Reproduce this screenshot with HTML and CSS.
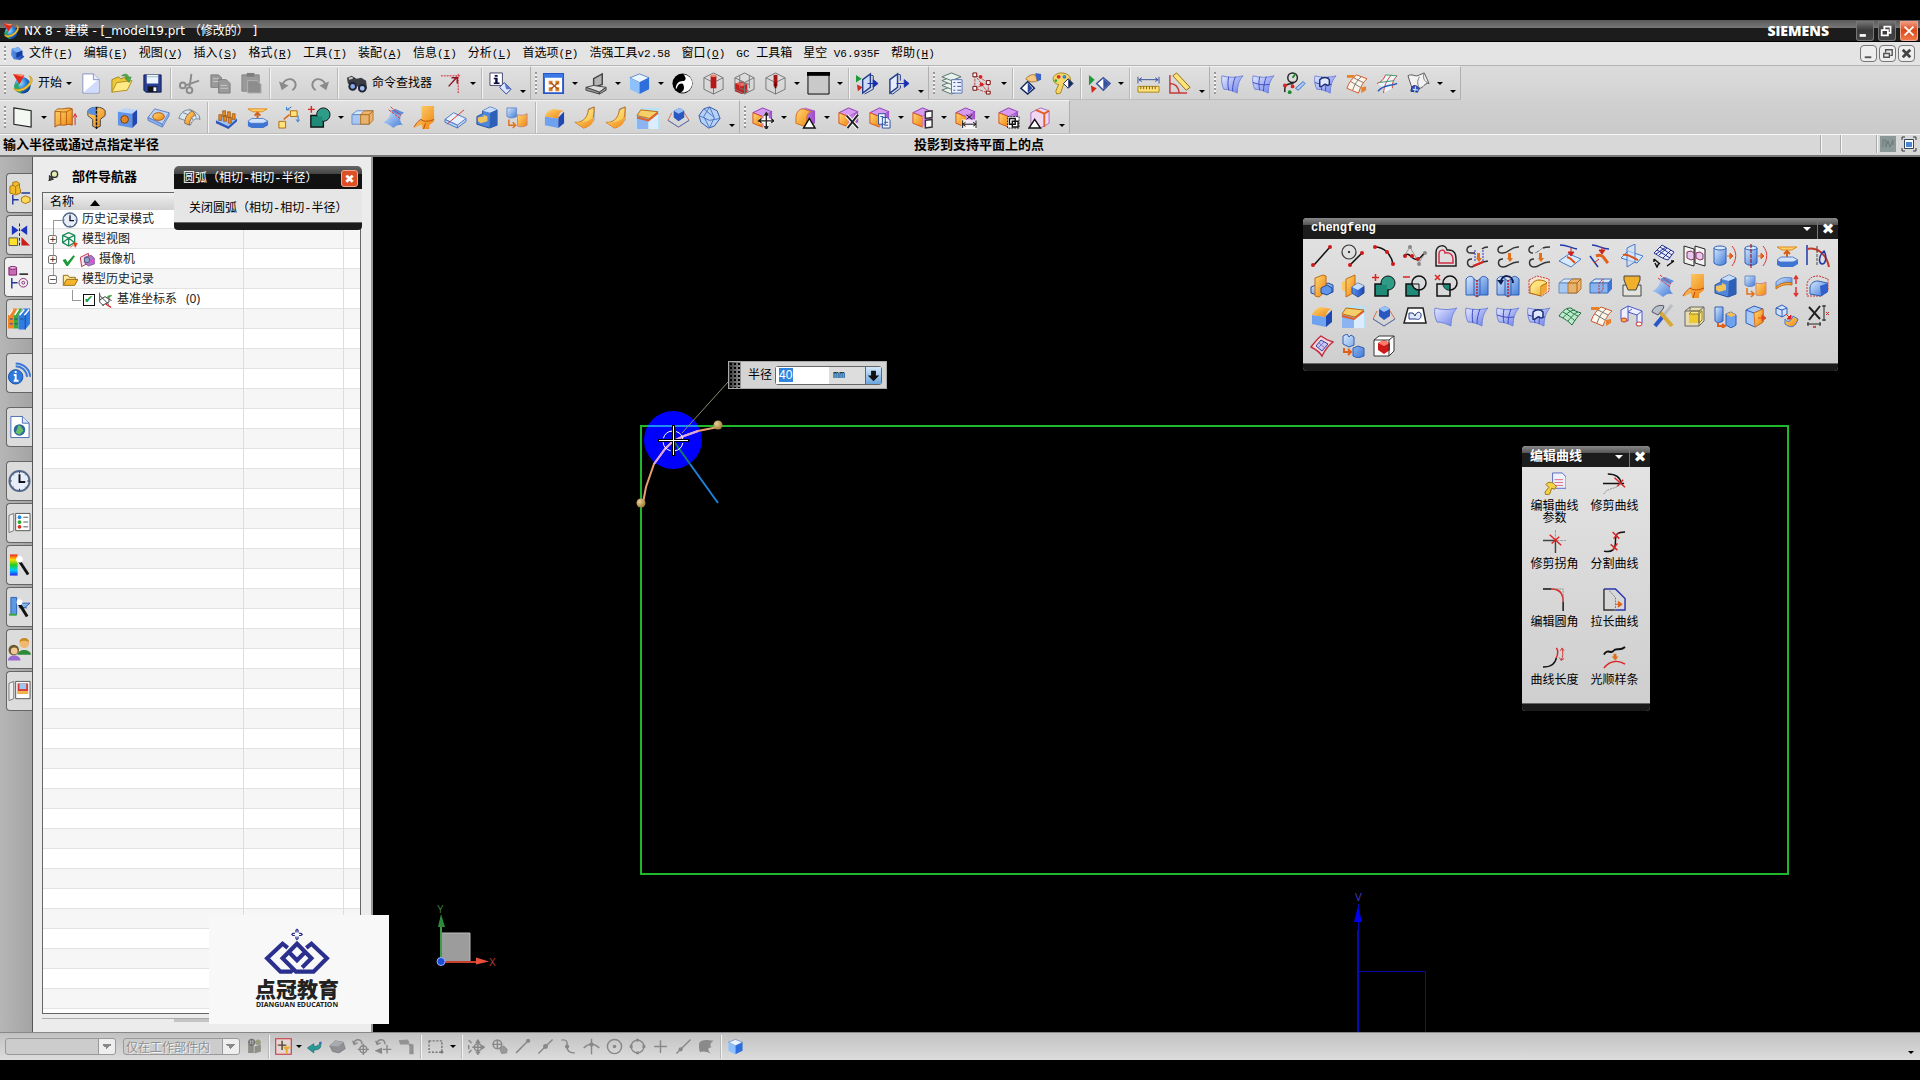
FILE: index.html
```html
<!DOCTYPE html>
<html lang="zh-CN">
<head>
<meta charset="utf-8">
<title>NX 8 - 建模</title>
<link rel="stylesheet" href="styles.css">
</head>
<body>
<svg class="defs" width="0" height="0" aria-hidden="true">
<defs>
<linearGradient id="gb" x1="0" y1="0" x2="1" y2="1"><stop offset="0" stop-color="#d8eafd"/><stop offset="1" stop-color="#3f78d8"/></linearGradient>
<linearGradient id="gd" x1="0" y1="0" x2="1" y2="0"><stop offset="0" stop-color="#5b94ea"/><stop offset="1" stop-color="#1b44b4"/></linearGradient>
<linearGradient id="go" x1="0" y1="0" x2="1" y2="1"><stop offset="0" stop-color="#ffd873"/><stop offset="1" stop-color="#ee8310"/></linearGradient>
<linearGradient id="gy" x1="0" y1="0" x2="1" y2="1"><stop offset="0" stop-color="#fff6b8"/><stop offset="1" stop-color="#f2bb2c"/></linearGradient>
<linearGradient id="gv" x1="0" y1="0" x2="1" y2="1"><stop offset="0" stop-color="#e3e8ff"/><stop offset="1" stop-color="#6a7bea"/></linearGradient>
<linearGradient id="gp" x1="0" y1="0" x2="1" y2="0"><stop offset="0" stop-color="#e2a5f5"/><stop offset="1" stop-color="#9a4cc8"/></linearGradient>
<linearGradient id="rainbow" x1="0" y1="0" x2="0" y2="1"><stop offset="0" stop-color="#e22"/><stop offset=".25" stop-color="#fd0"/><stop offset=".5" stop-color="#2c2"/><stop offset=".75" stop-color="#0cf"/><stop offset="1" stop-color="#22e"/></linearGradient>
<radialGradient id="ball" cx=".35" cy=".35" r=".7"><stop offset="0" stop-color="#9fe6ff"/><stop offset=".6" stop-color="#1f74d8"/><stop offset="1" stop-color="#0b3a8c"/></radialGradient>
<radialGradient id="brass" cx=".35" cy=".35" r=".7"><stop offset="0" stop-color="#e8cf94"/><stop offset="1" stop-color="#a07c38"/></radialGradient>
</defs>

<symbol id="nx" viewBox="0 0 24 24"><circle cx="12" cy="14" r="8.500" fill="url(#ball)"/><path d="M3 14a9 9 0 0 0 9 8.500c-4-3-5-8-3-13z" fill="#2aa86a"/><path d="M2 2l12 1-5 10z" fill="#e02a18"/><path d="M2 2l12 1-3 2z" fill="#ff8f70"/><path d="M19 4c6 2 3 10-4 14-5 3-11 3-12-1 3 2 7 1 11-1 6-4 8-9 5-12z" fill="#f5c533" stroke="#b88a10" stroke-width=".6"/></symbol>
<symbol id="part" viewBox="0 0 24 24"><path d="M4 4l10-2 6 5v6l3 3-6 5-10-1-4-7z" fill="url(#gd)"/><path d="M4 4l10-2 6 5-9 3z" fill="#7fb3f5"/><path d="M11 10l9-3v6l-9 5z" fill="#123f9c"/></symbol>
<symbol id="new" viewBox="0 0 24 24"><path d="M4 2h11l6 6v14H4z" fill="#fff" stroke="#8793c4"/><path d="M6 20L20 8v13H6z" fill="#cfdcff"/><path d="M15 2v6h6" fill="#e8eeff" stroke="#8793c4"/></symbol>
<symbol id="open" viewBox="0 0 24 24"><path d="M2 21V8l7-3 2 2 8-2v5" fill="#ecc93b" stroke="#a5841b"/><path d="M2 21l5-10 16-2-5 10z" fill="#ffe985" stroke="#b08d1e"/><path d="M12 4c4-3 7-2 8 2l2-1-2 6-4-4 2-.5c-1-2-3-3-6-2.500z" fill="#4fb04a" stroke="#2a7a2a" stroke-width=".6"/></symbol>
<symbol id="save" viewBox="0 0 24 24"><path d="M3 3h18v18H5l-2-2z" fill="#2b3f94" stroke="#131f55"/><path d="M6 3h12v9H6z" fill="#eef4ff"/><path d="M6 5h12" stroke="#9bb"/><path d="M7 15h10v6H7z" fill="#10161f"/><path d="M13 16h3v4h-3z" fill="#fff"/></symbol>
<symbol id="cut" viewBox="0 0 24 24"><g fill="none" stroke="#8a8a8a" stroke-width="2"><circle cx="5" cy="14" r="3"/><circle cx="12" cy="19" r="3"/><path d="M8 14l14-5M12 16l2-14"/></g></symbol>
<symbol id="copy" viewBox="0 0 24 24"><g fill="#9a9a9a" stroke="#7c7c7c"><path d="M2 3h8l3 3v10H2z"/><path d="M10 8h8l4 4v10H10z"/></g><path d="M4 7h6M4 10h6M12 14h7M12 17h8" stroke="#c8c8c8"/></symbol>
<symbol id="paste" viewBox="0 0 24 24"><path d="M2 3h18v17H2z" fill="#9a9a9a" stroke="#848484"/><path d="M7 1h8v4H7z" fill="#7e7e7e"/><path d="M8 9h10l4 4v9H8z" fill="#8d8d8d" stroke="#b4b4b4"/></symbol>
<symbol id="undo" viewBox="0 0 24 24"><path d="M5 15C7 7 16 5 19 11c1 3 0 6-3 8" fill="none" stroke="#8a8a8a" stroke-width="2"/><path d="M2 10l3 9 7-5z" fill="#8a8a8a"/></symbol>
<symbol id="redo" viewBox="0 0 24 24"><path d="M19 15C17 7 8 5 5 11c-1 3 0 6 3 8" fill="none" stroke="#8a8a8a" stroke-width="2"/><path d="M22 10l-3 9-7-5z" fill="#8a8a8a"/></symbol>
<symbol id="binoc" viewBox="0 0 24 24"><path d="M2 6l5-2 5 3 5-1 5 3 1 8-5 3-4-4-3-3-3 3-5-4z" fill="#3a3d44"/><circle cx="8" cy="15" r="3.500" fill="#8ca6ea" stroke="#1d2333" stroke-width="2"/><circle cx="18" cy="17" r="3.500" fill="#a8bcf4" stroke="#1d2333" stroke-width="2"/><path d="M4 7l4-1" stroke="#ccc" stroke-width="2"/></symbol>
<symbol id="snap" viewBox="0 0 24 24"><path d="M1 4h21M19 2v21" stroke="#d02030" stroke-dasharray="2 1"/><path d="M9 15l9-10M12 6h6v6" fill="none" stroke="#8c1626" stroke-width="1.500"/></symbol>
<symbol id="info" viewBox="0 0 24 24"><path d="M1 1h13v13H1z" fill="#fff" stroke="#446"/><path d="M6 3h3v2H6zM5 6h4v5h2v1.500H5V11h1.500V7.500H5z" fill="#0a0a3c"/><path d="M16 11l7 7-5 5-7-7z" fill="#dfe6ff" stroke="#2b3f94"/><path d="M16 11l7 7h-5z" fill="#5a74cc"/></symbol>
<symbol id="fit" viewBox="0 0 24 24"><path d="M2 2h20v20H2z" fill="#fff" stroke="#2a56c8" stroke-width="2"/><path d="M2 2h20v4H2z" fill="#3c78e4"/><path d="M7 9h4v4H7zM14 9h4v4h-4zM7 16h4v4H7zM14 16h4v4h-4z" fill="#d9822b"/><path d="M9 11l8 7M17 11l-8 7" stroke="#a8551a" stroke-width="1.500"/></symbol>
<symbol id="orient" viewBox="0 0 24 24"><path d="M9 7l9-5v11l-9 3z" fill="#b4b4b4" stroke="#444" stroke-width="1.500"/><path d="M1 16l8-2 13 2-7 5z" fill="#dcdcdc" stroke="#444"/><path d="M1 16v3l14 4v-2zM15 23l7-4v-3l-7 5z" fill="#999" stroke="#444"/></symbol>
<symbol id="shade" viewBox="0 0 24 24"><path d="M12 2l10 4-10 5L2 6z" fill="#eaf5ff" stroke="#2f5fb5" stroke-width=".7"/><path d="M2 6l10 5v12L2 18z" fill="#8cc1fb"/><path d="M22 6l-10 5v12l10-5z" fill="#2f6fdc"/></symbol>
<symbol id="yin" viewBox="0 0 24 24"><circle cx="12" cy="12" r="10.500" fill="#000"/><path d="M13 2.500c10 1 12 12 5 17-3 2-6 2-8 2 4-2 4-5 3-8-1-2-4-2-6 1-1 2-1 3-2 3 0-5 3-8 7-8 3 0 5-3 1-7z" fill="#fff"/></symbol>
<symbol id="box" viewBox="0 0 24 24"><path d="M12 1l10 5v12l-10 5-10-5V6zM2 6l10 5 10-5M12 11v12" fill="none" stroke="#777"/></symbol>
<symbol id="sect1" viewBox="0 0 24 24"><use href="#box"/><path d="M9 4h6v13H9z" fill="#b41818"/><ellipse cx="12" cy="4" rx="3" ry="1.500" fill="#e86"/></symbol>
<symbol id="sect2" viewBox="0 0 24 24"><path d="M2 12l8-2 5 3v8l-6 2-7-3z" fill="#c42020"/><path d="M3 12l7-1 4 2-5 2z" fill="#f26a5a"/><use href="#box"/><path d="M7 4v13l10 3M17 4v13M7 9l10 4" fill="none" stroke="#777"/></symbol>
<symbol id="sect3" viewBox="0 0 24 24"><use href="#box"/><path d="M10 3h4v12h-4z" fill="#a41414"/><path d="M12 11v6" stroke="#600" stroke-width="2"/></symbol>
<symbol id="bg" viewBox="0 0 24 24"><path d="M1 1h22v22H1z" fill="#c9c9c9" stroke="#000"/><path d="M0 0h24v4H0z"/></symbol>
<symbol id="clip" viewBox="0 0 24 24"><path d="M3 8l8-6v14l-8 6z" fill="#e6ecff" stroke="#23408c" stroke-width="1.500"/><path d="M3 8l8-6 3 1v6M3 22l3 1 8-6v-3" fill="none" stroke="#23408c"/><path d="M10 12h9M18 8l5 4-5 4z" fill="#1730b0" stroke="#1730b0"/></symbol>
<symbol id="clip2" viewBox="0 0 24 24"><path d="M0 3l6 4-6 4z" fill="#1f9a3a"/><path d="M1 13l6 3-5 4z" fill="#d42a1a"/><path d="M7 8l8-6v14l-8 6z" fill="#cfdafc" stroke="#23408c" stroke-width="1.500"/><path d="M15 3l3 1v14l-9 5" fill="none" stroke="#23408c"/><path d="M12 12h8M18 8l5 4-5 4z" fill="#1730b0" stroke="#1730b0"/></symbol>
<symbol id="layers" viewBox="0 0 24 24"><g fill="#e9f1ee" stroke="#56736a"><path d="M2 19l10-4 10 4-10 4z"/><path d="M2 14l10-4 10 4-10 4z"/><path d="M2 9l10-4 10 4-10 4z"/><path d="M2 5l10-4 10 4-10 4z"/></g><path d="M12 8h11v14H12z" fill="#eef3ff" stroke="#5573b8"/><path d="M14 11h2M14 15h2M14 19h2M18 11h4M18 15h4M18 19h4" stroke="#35519c"/></symbol>
<symbol id="points" viewBox="0 0 24 24"><path d="M4 3v14l14 5V11zM4 3l14 19M4 17L18 11" fill="none" stroke="#b44" stroke-dasharray="3 1"/><g fill="#fff" stroke="#700"><path d="M2 1h4v4H2zM2 15h4v4H2zM16 9h4v4h-4zM16 20h4v3h-4z"/></g><circle cx="10" cy="5" r="2" fill="#d22"/><circle cx="11" cy="13" r="2" fill="#d22"/></symbol>
<symbol id="editobj" viewBox="0 0 24 24"><path d="M8 10l7 7-7 6-7-6z" fill="#fff" stroke="#14285c" stroke-width="1.500"/><path d="M8 11l5 6-5 5z" fill="#2b4aa8"/><path d="M6 7c3-3 6-5 10-4l2 6c-4 2-8 2-12-2z" fill="#f3c884" stroke="#a8742c"/><path d="M16 1l6 1v6l-4 2z" fill="#3c64c8"/></symbol>
<symbol id="paint" viewBox="0 0 24 24"><path d="M10 1c10 0 12 6 9 11l-6 1-3 9-4 1-1-3 3-7C0 12 0 2 10 1z" fill="#f7d768" stroke="#a5841b"/><circle cx="8" cy="5" r="2" fill="#d33"/><circle cx="14" cy="5" r="2" fill="#38c"/><circle cx="5" cy="9" r="1.500" fill="#3a3"/><path d="M18 7l5 5-5 5-5-5z" fill="#fff" stroke="#14285c"/><path d="M18 7l5 5-5 5z" fill="#14285c"/></symbol>
<symbol id="showobj" viewBox="0 0 24 24"><path d="M1 3l6 5-6 6z" fill="#1f9a3a"/><path d="M3 14l6 3-5 5z" fill="#d42a1a"/><path d="M16 6l7 6-7 7-7-7z" fill="#fff" stroke="#35519c" stroke-width="1.500"/><path d="M16 7l6 5-6 6z" fill="#35519c"/></symbol>
<symbol id="ruler" viewBox="0 0 24 24"><path d="M1 15h22v6H1z" fill="#ffe27a" stroke="#a8841c"/><path d="M4 15v3M7 15v3M10 15v3M13 15v3M16 15v3M19 15v3" stroke="#7a5c10"/><path d="M1 5v7M23 5v7M2 8h20M5 6L2 8l3 2M19 6l3 2-3 2" fill="none" stroke="#35519c"/></symbol>
<symbol id="angle" viewBox="0 0 24 24"><path d="M2 3v19h18M2 12c6 0 9 4 10 10" fill="none" stroke="#c43a3a" stroke-width="1.500"/><path d="M5 4l4-3 14 15-4 3z" fill="#ffe27a" stroke="#8c6c10"/></symbol>
<symbol id="surfa" viewBox="0 0 24 24"><path d="M1 4c7 2 15 2 22 0-4 4-6 10-6 18-4-2-9-4-14-4C1 14 0 9 1 4z" fill="url(#gv)" stroke="#7186d8"/></symbol>
<symbol id="surf1" viewBox="0 0 24 24"><use href="#surfa"/><path d="M8 5c-1 5-1 9 0 14M15 5c-2 5-3 10-3 15" fill="none" stroke="#3d4dbd"/></symbol>
<symbol id="surf2" viewBox="0 0 24 24"><use href="#surf1"/><path d="M1 11c6 2 11 3 17 2" fill="none" stroke="#3d4dbd"/></symbol>
<symbol id="surf3" viewBox="0 0 24 24"><use href="#surf2"/><path d="M6 15V8c3-3 8-3 10 0v5c-2 3-3-1-5 0s-3 3-5 2z" fill="#dfe8ff" stroke="#1c2f70" stroke-width="1.500"/></symbol>
<symbol id="analysis" viewBox="0 0 24 24"><circle cx="10" cy="6" r="5" fill="none" stroke="#222" stroke-width="1.500"/><path d="M10 6l3-4" stroke="#1a8a2a" stroke-width="2"/><path d="M2 21C1 14 4 12 11 12" fill="none" stroke="#222" stroke-width="1.500"/><circle cx="2" cy="14" r="2" fill="#d22"/><circle cx="10" cy="15" r="2" fill="#d22"/><circle cx="7" cy="21" r="2" fill="#1a8a2a"/><path d="M13 17l8-7 2 2-7 7z" fill="#b9c6f5" stroke="#27c"/></symbol>
<symbol id="mesh" viewBox="0 0 24 24"><path d="M2 17C4 11 8 6 12 3l11 4c-4 3-7 9-9 15z" fill="#fff6ea" stroke="#d0562a"/><path d="M9 6l10 5M6 10l10 6M17 5c-4 3-7 8-9 14" stroke="#777" fill="none"/><path d="M2 3h8v3H2zM17 16l5-1v4l-5 3z" fill="#e8812a"/></symbol>
<symbol id="rcurves" viewBox="0 0 24 24"><path d="M1 12c4-1 7-4 9-9l12 1c-4 4-5 7-5 13l-9 5c0-4-2-8-7-10z" fill="#eef8fc"/><path d="M1 12c4-1 7-4 9-9M22 4c-4 4-5 7-5 13M8 22c0-7 3-13 8-19" stroke="#d03a3a" fill="none"/><path d="M10 3l12 1M3 11l16-2" stroke="#3a9a6a"/><path d="M2 20c6-7 12-5 20-8" fill="none" stroke="#2a5fb8" stroke-width="1.500"/></symbol>
<symbol id="sheet" viewBox="0 0 24 24"><path d="M1 4c4-3 8 2 12-1l5-2 5 11c-5-1-6 5-10 5S8 13 5 16z" fill="#f2f2f2" stroke="#555"/><path d="M5 16c2-3 5-2 8 1l-2 4-7-1z" fill="#3a50c0" stroke="#1c2a80"/><path d="M6 18l6 1M9 15l-1 6" stroke="#cfe"/><path d="M13 5c-3 5-2 8 0 12M18 1c-2 5 0 9 5 11" stroke="#777" fill="none"/></symbol>

<symbol id="datum" viewBox="0 0 24 24"><path d="M3 2l18 3v17L3 19z" fill="#f4f8f2" stroke="#222" stroke-width="1.200"/></symbol>
<symbol id="extrude" viewBox="0 0 24 24"><path d="M1 6c2-4 5-3 8-3s6-2 10 0v17c-4-2-6 0-9 0s-6-1-9 2z" fill="url(#go)" stroke="#a85408"/><path d="M7 6v14M13 6v14M1 6c4-1 8 1 12 0l6-3" stroke="#b86010" fill="none"/><path d="M22 20V9M20 12l2-4 2 4" stroke="#d22" fill="none"/></symbol>
<symbol id="revolve" viewBox="0 0 24 24"><path d="M3 5c2-5 16-5 18 0v5l-5 4v7l-4 2-4-2v-7l-5-4z" fill="url(#go)" stroke="#444"/><path d="M3 5c2-4 6-4 9-4v9L8 9C5 9 3 8 3 5z" fill="#5a8ee0"/><path d="M12 1v23" stroke="#111" stroke-width="1.500" stroke-dasharray="3 1"/></symbol>
<symbol id="hole" viewBox="0 0 24 24"><path d="M2 6l7-4 13 2-5 4z" fill="#b9d4fa"/><path d="M2 6l15 2v15L2 20z" fill="#5e94ea"/><path d="M17 8l5-4v14l-5 5z" fill="#1f48b2"/><circle cx="9" cy="14" r="4" fill="#e2862a" stroke="#7c3c08"/></symbol>
<symbol id="emboss" viewBox="0 0 24 24"><path d="M1 12L8 3l15 4-7 12z" fill="#bcd3f7" stroke="#5b82c8"/><path d="M1 12v3l15 7v-3zM16 22l7-12V7" fill="#8fb2ec" stroke="#5b82c8"/><ellipse cx="12" cy="11" rx="6" ry="4" fill="url(#go)" stroke="#a85408"/></symbol>
<symbol id="sweep" viewBox="0 0 24 24"><path d="M1 13C3 4 13 0 22 10l1 4c-4-2-8 0-10 6-3-4-7-6-12-7z" fill="#dbe6ee" stroke="#6c8494"/><path d="M5 7c5 1 9 4 11 8M12 3c3 2 6 5 7 9" stroke="#6c8494" fill="none"/><path d="M7 18c0-6 3-10 8-13l3 4c-3 2-6 5-6 11z" fill="url(#go)" stroke="#865"/></symbol>
<symbol id="pattern" viewBox="0 0 24 24"><path d="M1 15l9-6 13 4-9 8z" fill="#9fc0f4"/><path d="M1 15v3l13 6v-3zM14 24l9-8v-3l-9 8z" fill="#2b58bc"/><g fill="#e58a1c" stroke="#9c4e08" stroke-width=".7"><path d="M4 9h3v6H4zM9 10h3v6H9zM14 12h3v6h-3zM8 5h3v6H8zM13 6h3v6h-3zM18 8h3v6h-3z"/></g></symbol>
<symbol id="lift" viewBox="0 0 24 24"><path d="M2 3h20l-5 3H7z" fill="#ffd06a" stroke="#e08a1a"/><path d="M12 14V8M9 10l3-3 3 3" stroke="#d4601a" stroke-width="2" fill="none"/><path d="M2 16l4-3h12l5 3-5 2H5z" fill="#cfe1fb" stroke="#5b82c8"/><path d="M2 16v5l4 2h12l5-3v-4l-5 2H5z" fill="#3f75d2"/></symbol>
<symbol id="instance" viewBox="0 0 24 24"><path d="M2 16h7v7H2zM14 5h7v6h-7z" fill="#ffe27a" stroke="#b06a10"/><path d="M7 14l6-5" stroke="#d46a1a" stroke-width="1.500"/><path d="M10 4l5-3M10 4V1M10 4h3M22 10v6M20 14l2 3M22 16l2-2" stroke="#27c" fill="none"/></symbol>
<symbol id="unite" viewBox="0 0 24 24"><path d="M3 10h13v12H3z" fill="#1f8a78" stroke="#111" stroke-width="1.500"/><circle cx="16" cy="9" r="7" fill="#2f9c88" stroke="#111"/><path d="M4 11h11v10H4z" fill="#1f8a78"/><path d="M0 3.500h7M3.500 0v7" stroke="#d22" stroke-width="1.500"/></symbol>
<symbol id="subtract" viewBox="0 0 24 24"><path d="M3 10h13v12H3z" fill="#1f8a78" stroke="#111" stroke-width="1.500"/><circle cx="16" cy="9" r="7" fill="#d8dcdc" stroke="#111" stroke-width="1.500"/><path d="M9 10h7v6" fill="none" stroke="#111"/><path d="M0 3h7" stroke="#d22" stroke-width="1.500"/></symbol>
<symbol id="intersect" viewBox="0 0 24 24"><circle cx="16" cy="9" r="7" fill="none" stroke="#111" stroke-width="1.500"/><path d="M9 10h7v6c-4 0-7-3-7-6z" fill="#1f8a78"/><path d="M3 10h13v12H3z" fill="none" stroke="#111" stroke-width="1.500"/><path d="M1 1l5 5M6 1L1 6" stroke="#d22" stroke-width="1.500"/></symbol>
<symbol id="split" viewBox="0 0 24 24"><path d="M1 9l5-4h17l-4 4z" fill="#d6e6fb" stroke="#6a8cc4"/><path d="M1 9h18v10H1z" fill="#a8c8f2" stroke="#6a8cc4"/><path d="M10 9l4-4h9v10l-4 4h-9z" fill="#f2ad58" stroke="#b06a10" opacity=".85"/><path d="M10 9h9l4-4M19 9v10" stroke="#b06a10" fill="none"/></symbol>
<symbol id="split2" viewBox="0 0 24 24"><path d="M1 9l5-4h17l-4 4z" fill="#d6e6fb" stroke="#3f6fb8"/><path d="M1 9h18v10H1z" fill="#86b4f0" stroke="#3f6fb8"/><path d="M19 9l4-4v10l-4 4z" fill="#3f75d2"/><path d="M10 19V9l4-4v11z" stroke="#c33" stroke-dasharray="2 1" fill="none"/></symbol>
<symbol id="strim" viewBox="0 0 24 24"><path d="M1 17c5-2 8-6 8-12l11 4c-2 5-1 8 2 11-4-1-7 0-10 3-4-3-7-5-11-6z" fill="url(#gb)"/><path d="M9 5l5-2 9 4-3 2c-3 1-6-1-11-4z" fill="#5c8cdc"/><path d="M9 1l11 9M7 4l12 9" stroke="#d33" stroke-dasharray="3 1"/></symbol>
<symbol id="leg" viewBox="0 0 24 24"><path d="M9 0h13v16l-5 4v4h-7l-1-5-8 4c2-6 6-7 8-9z" fill="url(#go)"/><path d="M8 14c4 3 9 2 14 0M13 18l-2 6M1 22c3-5 6-8 8-8" stroke="#c4480c" fill="none"/></symbol>
<symbol id="slab" viewBox="0 0 24 24"><path d="M1 14l9-7 13 6-9 7z" fill="#e6effc" stroke="#4a78c8"/><path d="M1 14v3l13 6v-3zM14 23l9-7v-3" fill="#b9cff4" stroke="#4a78c8"/><path d="M3 19L21 4" stroke="#d33"/></symbol>
<symbol id="blocku" viewBox="0 0 24 24"><path d="M8 5l8-4 7 3v16l-8 3L2 19v-8l6-3z" fill="#4d86da" stroke="#234e9c"/><path d="M8 5l8-4 7 3-7 3z" fill="#c8ddf9"/><path d="M9 9l4 2v5l-7 2-3-2v-4l6-1z" fill="#f2c35a"/><path d="M16 7l7-3v16l-8 3z" fill="#2f60b8"/></symbol>
<symbol id="tubes" viewBox="0 0 24 24"><path d="M1 2h10v9c-3 2-7 2-10 0z" fill="url(#gb)" stroke="#6a8cc4"/><path d="M12 9c3 1 7 1 10-1v12c-3 2-7 2-10 1z" fill="url(#go)" stroke="#c88"/><path d="M3 14v6h6M7 17l3 3-3 3" stroke="#e0701a" stroke-width="1.500" fill="none"/></symbol>
<symbol id="eblend" viewBox="0 0 24 24"><path d="M2 8l8-5 12 2-6 5z" fill="#cfe1fb"/><path d="M2 11l14 2v10L2 20z" fill="#6fa2ee"/><path d="M16 12l6-6v12l-6 5z" fill="#1f48b2"/><path d="M2 11c1-4 4-7 9-8l11 2c-4 1-6 4-6 8z" fill="url(#go)"/></symbol>
<symbol id="face1" viewBox="0 0 24 24"><path d="M15 3l6-2v14l-6 3z" fill="#d6e2f4" stroke="#8aa2cc"/><path d="M1 17c7 1 13-4 14-13l6-3c0 12-2 20-11 22z" fill="url(#gy)" stroke="#c46a10"/><path d="M1 17l9 6c7-1 11-5 11-12-4 4-10 7-20 6z" fill="url(#go)"/></symbol>
<symbol id="chamfer" viewBox="0 0 24 24"><path d="M0 24V10l6-8h18v22z" fill="#b8e2f6"/><path d="M1 24V10l12 3v11z" fill="#8cb4f2"/><path d="M13 24V13l10-6v17z" fill="#dcecff"/><path d="M1 10l4-6 18 2-9 7z" fill="#f4cf6a" stroke="#c46a10"/><path d="M1 12l12 3 10-8" stroke="#e0602a" fill="none" stroke-width="2"/></symbol>
<symbol id="draft" viewBox="0 0 24 24"><path d="M5 7L1 15l11 7 11-7-5-8" fill="none" stroke="#d07050"/><path d="M1 15l11 7 11-7" fill="none" stroke="#4a78c8"/><path d="M7 5l6-3 5 3v7l-6 4-5-4z" fill="#2a57c0"/><path d="M7 5l6-3 5 3-6 3z" fill="#9ac0f5"/></symbol>
<symbol id="poly" viewBox="0 0 24 24"><path d="M12 1l8 4 3 8-6 8-6 2-8-6-2-7 5-7z" fill="#b8d2f6" stroke="#2f5aa8"/><path d="M1 10l11 5 11-2M12 1L6 11l6 12 5-11zM6 3l11 9" fill="none" stroke="#4a74c4"/></symbol>
<symbol id="sync" viewBox="0 0 24 24"><path d="M2 7l10-5 10 4-10 5z" fill="#d69af0" stroke="#8c3cb4"/><path d="M2 7l10 4v11L2 18z" fill="url(#go)" stroke="#d8501c"/><path d="M12 11l10-5v11l-10 5z" fill="url(#gp)"/></symbol>
<symbol id="move" viewBox="0 0 24 24"><use href="#sync"/><path d="M16 8v15M8.500 15.500H24" stroke="#fff" stroke-width="5"/><path d="M16 8v15M8.500 15.500H24M14 10l2-3 2 3M14 21l2 3 2-3M11 13l-3 2.500 3 2M21 13l3 2.500-3 2" stroke="#222" stroke-width="1.500" fill="none"/></symbol>
<symbol id="resize" viewBox="0 0 24 24"><path d="M2 10c0-5 6-9 11-8l9 3v13l-9 4V12z" fill="url(#gp)"/><path d="M2 13c0-7 4-10 8-10l8 3c-3 0-5 4-5 8v8L2 18z" fill="url(#go)" stroke="#d8701c"/><path d="M16 13l6 10H10z" fill="#fff" stroke="#111" stroke-width="1.500"/></symbol>
<symbol id="delface" viewBox="0 0 24 24"><use href="#sync"/><path d="M10 10l12 13M22 9L11 23" stroke="#fff" stroke-width="4"/><path d="M10 10l12 13M22 9L11 23" stroke="#222" stroke-width="2"/></symbol>
<symbol id="copyface" viewBox="0 0 24 24"><use href="#sync"/><path d="M11 8h7v11h-7zM15 12h5l3 3v8h-8z" fill="#eef4ff" stroke="#2c4f9c"/><path d="M17 17h4M17 20h4M13 11h3" stroke="#2c4f9c"/></symbol>
<symbol id="patface" viewBox="0 0 24 24"><use href="#sync"/><path d="M15 6l7-1v7l-7 1zM15 15l7-1v8l-7 1z" fill="#fff" stroke="#333" stroke-width="1.500"/></symbol>
<symbol id="dimface" viewBox="0 0 24 24"><use href="#sync"/><path d="M8 14h16v10H8z" fill="#fff" opacity=".8"/><path d="M13 9l6 5M19 9l-6 5M9 15v8M23 15v8M10 19h12M12 17l-3 2 3 2M20 17l3 2-3 2" stroke="#111" fill="none"/></symbol>
<symbol id="grpface" viewBox="0 0 24 24"><use href="#sync"/><path d="M11 11h12v12H11z" fill="#fff" stroke="#223" stroke-dasharray="2 1"/><path d="M13 13h6v6h-6zM16 16h6v6h-6z" fill="none" stroke="#111" stroke-width="1.500"/></symbol>
<symbol id="hist" viewBox="0 0 24 24"><path d="M3 7l10-5 9 3v13l-9 5-10-4z" fill="#f0d8f2" stroke="#a86ac0"/><path d="M8 4l9 4v14M17 8l5-3" fill="none" stroke="#e0602a" stroke-width="2"/><path d="M7 14l6 9H1z" fill="#fff" stroke="#111" stroke-width="1.500"/></symbol>

<symbol id="line" viewBox="0 0 24 24"><path d="M4 21L20 3" stroke="#111" stroke-width="1.500"/><circle cx="3" cy="21" r="2" fill="#d01818"/><circle cx="20" cy="3" r="2" fill="#d01818"/></symbol>
<symbol id="circle" viewBox="0 0 24 24"><circle cx="8" cy="8" r="7" fill="none" stroke="#333" stroke-width="1.200"/><circle cx="8" cy="8" r="1"/><path d="M9 21L21 9" stroke="#111" stroke-width="1.500"/><circle cx="9" cy="21" r="2" fill="#d01818"/><circle cx="21" cy="9" r="2" fill="#d01818"/></symbol>
<symbol id="arc" viewBox="0 0 24 24"><path d="M3 3c9 0 16 7 18 17" fill="none" stroke="#111" stroke-width="1.500"/><circle cx="3" cy="3" r="2" fill="#d01818"/><circle cx="15" cy="8" r="2" fill="#d01818"/><circle cx="21" cy="20" r="2" fill="#d01818"/></symbol>
<symbol id="spline" viewBox="0 0 24 24"><path d="M1 12l6-9 9 16 6-10" stroke="#999" fill="none"/><path d="M1 12c7-6 7 6 14 3 4-1 4-5 7-6" stroke="#111" stroke-width="1.500" fill="none"/><g fill="#888"><circle cx="7" cy="3" r="2"/><circle cx="16" cy="20" r="2"/><circle cx="22" cy="9" r="2"/></g><g fill="#d01818"><circle cx="2" cy="12" r="2"/><circle cx="9" cy="12" r="2"/><circle cx="15" cy="15" r="2"/></g></symbol>
<symbol id="offset" viewBox="0 0 24 24"><path d="M2 22V9c0-9 10-9 11-3 8-1 9 5 9 9v7z" fill="none" stroke="#222" stroke-width="1.500"/><path d="M5 19v-9c0-5 6-5 6-1 6-1 8 3 8 6v4z" fill="none" stroke="#d0304a" stroke-width="1.500"/></symbol>
<symbol id="bridge" viewBox="0 0 24 24"><path d="M7 2C1 2 0 9 6 9h4M17 5c2-2 4-2 6-2M7 15c-6 0-6 7 0 8l11-5 5-1" fill="none" stroke="#333" stroke-width="1.500"/><path d="M8 22l10-4" stroke="#d22" stroke-width="2"/><path d="M10 6v11M18 6v11" stroke="#33c" stroke-dasharray="2 1"/><path d="M12 9h3v5h2l-3 4-3-4h1z" fill="#e0701a"/></symbol>
<symbol id="join1" viewBox="0 0 24 24"><path d="M7 2C1 2 0 9 6 9c7 1 8-7 17-6M7 15c-6 0-6 7 0 8 6 0 8-6 16-5" fill="none" stroke="#333" stroke-width="1.500"/><path d="M12 9h3v5h2l-3 4-3-4h1z" fill="#e0701a"/></symbol>
<symbol id="join2" viewBox="0 0 24 24"><path d="M7 2C1 2 0 9 6 9M16 4c2-1 4-1 7-1M7 15c-6 0-6 7 0 8 6 0 8-6 16-5" fill="none" stroke="#333" stroke-width="1.500"/><path d="M8 9c4-1 5-4 8-5" stroke="#999" stroke-dasharray="2 1"/><path d="M12 9h3v5h2l-3 4-3-4h1z" fill="#e0701a"/></symbol>
<symbol id="project" viewBox="0 0 24 24"><path d="M1 17l10-7 12 5-10 8z" fill="#d8ebfc" stroke="#4a78c8"/><path d="M2 1c7 0 11 3 17 4" stroke="#2038a8" stroke-width="1.500" fill="none"/><path d="M9 13c4 1 5 3 8 6" stroke="#e0501a" stroke-width="2" fill="none"/><path d="M13 4v6M10 8l3 4 3-4z" stroke="#c22" fill="#c22"/></symbol>
<symbol id="combine" viewBox="0 0 24 24"><path d="M3 1c6 0 10 4 17 4M1 12l8 11" stroke="#2038a8" stroke-width="1.500" fill="none"/><path d="M7 12c7-3 8 3 12 7" stroke="#e0601a" stroke-width="3" fill="none"/><path d="M13 3v5M10 6l3 4 3-4zM5 19l5-4" stroke="#c22" fill="#c22"/></symbol>
<symbol id="isect" viewBox="0 0 24 24"><path d="M1 14l7-7 15 5-6 7z" fill="#d8ebfc" stroke="#4a78c8"/><path d="M7 4l8-4v18l-8 5z" fill="#cfe1fb" fill-opacity=".6" stroke="#4a78c8"/><path d="M3 11c5-2 9 3 15 5" stroke="#e0501a" stroke-width="2" fill="none"/></symbol>
<symbol id="iso" viewBox="0 0 24 24"><path d="M3 9L11 1l12 7-6 8c-5-1-9-4-14-7z" fill="#e8eeff" stroke="#23308c"/><path d="M6 6l13 8M9 3l12 8M8 11l8-7M12 14l8-8M15 3L5 10" stroke="#23308c" fill="none"/><path d="M9 20l-6-5M3 15v3M16 22l7-5M23 17h-3M4 19l2 4 2-4" stroke="#111" fill="none" stroke-width="1.500"/></symbol>
<symbol id="planes" viewBox="0 0 24 24"><path d="M2 2l10 3v17L2 19zM13 2l10 3v17l-10-3z" fill="#f1f4f1" stroke="#222"/><path d="M5 8l4-1 3 2v6l-3 1-4-2zM14 9l4-1 3 2v5l-3 1-4-2z" fill="#e3c9ee" stroke="#8a2c5a"/></symbol>
<symbol id="wrap" viewBox="0 0 24 24"><path d="M1 4h12v15c-3 3-9 3-12 0z" fill="url(#gb)" stroke="#2f5fb5"/><ellipse cx="7" cy="4" rx="6" ry="2" fill="#dceafd" stroke="#2f5fb5"/><path d="M14 12h4M17 9l3 3-3 3z" fill="#e0601a" stroke="#e0601a"/><path d="M19 2c5 6 5 13 0 20" stroke="#d33" fill="none"/></symbol>
<symbol id="wrap2" viewBox="0 0 24 24"><use href="#wrap"/><path d="M7 0v24" stroke="#900" stroke-dasharray="4 1"/></symbol>
<symbol id="tangent" viewBox="0 0 24 24"><path d="M1 1v20" stroke="#2038a8" stroke-width="1.500"/><path d="M1 5c10-2 19 4 22 18" stroke="#c23a2a" stroke-width="2" fill="none"/><path d="M11 2v20" stroke="#444" stroke-dasharray="3 1"/><path d="M18 7c-5 4-6 12-2 13 4 0 5-8 2-13z" fill="none" stroke="#2038a8" stroke-width="1.500"/></symbol>
<symbol id="body1" viewBox="0 0 24 24"><path d="M1 13l5-2 6 2v6l-5 2-6-2zM13 11l5-2 5 2v7l-5 2-5-2z" fill="url(#gb)" stroke="#234e9c"/><path d="M5 4l8-3 3 1v15l-7 6-4-1z" fill="url(#go)" stroke="#c46a10"/><path d="M11 14l6-3 5 3v4l-5 3-6-2z" fill="#5e94ea" stroke="#234e9c"/></symbol>
<symbol id="body2" viewBox="0 0 24 24"><path d="M1 8l6-2v13l-6-3z" fill="#f9c860"/><path d="M5 5l9-4v17l-9 5z" fill="url(#go)" stroke="#c46a10"/><path d="M11 13l6-4 6 3v7l-6 4-6-4z" fill="url(#gd)" stroke="#234e9c"/><path d="M11 13l6-4 6 3-6 4z" fill="#c8ddf9"/></symbol>
<symbol id="sew" viewBox="0 0 24 24"><path d="M1 5c3-4 7-3 8 0l3 2 3-2c1-3 5-4 8 0v16h-8l-3 2-3-2H1z" fill="url(#gb)" stroke="#2f5fb5"/><path d="M9 5v16M15 5v16" stroke="#2f5fb5"/><path d="M12 6v17" stroke="#c22" stroke-width="1.500" stroke-dasharray="2 1"/></symbol>
<symbol id="unsew" viewBox="0 0 24 24"><use href="#sew"/><path d="M5 8c0-8 12-8 12 1" stroke="#111c50" stroke-width="2" fill="none"/><path d="M1 6h7l-3 5z" fill="#111c50"/></symbol>
<symbol id="patch" viewBox="0 0 24 24"><path d="M2 6l8-4 12 3v12l-7 5-13-3z" fill="#f6e5cf" stroke="#c33" stroke-dasharray="2 1"/><path d="M3 19v-6c2-5 8-5 11-1v10z" fill="url(#gy)" stroke="#b06a10"/><path d="M14 12l6-4v9l-6 5z" fill="#f2a63a"/><path d="M3 13c2-5 6-7 9-7s7 1 8 3l-6 3" fill="#ffe27a" stroke="#b06a10"/></symbol>
<symbol id="trap" viewBox="0 0 24 24"><path d="M3 11h18v11H3z" fill="#e4e4de" stroke="#444"/><path d="M4 2h16v4l-4 10H8L4 6z" fill="#f0b02c" stroke="#444"/></symbol>
<symbol id="offface" viewBox="0 0 24 24"><path d="M1 8c5-5 10-5 16-4v5c-6-1-11 0-16 4z" fill="url(#gb)" stroke="#5b82c8"/><path d="M1 15c5-4 10-5 16-4v-2c-6-1-11 0-16 4z" fill="url(#go)" stroke="#c46a10"/><path d="M21 3v7M19 5l2-3 2 3M21 13v8M19 19l2 3 2-3" stroke="#d33" fill="none" stroke-width="1.500"/></symbol>
<symbol id="scale" viewBox="0 0 24 24"><path d="M1 9c3-6 6-7 12-7l9 3v12l-7 5H1z" fill="none" stroke="#c33" stroke-dasharray="2 1"/><path d="M4 20v-7c1-4 4-6 8-6l9 2v9l-6 4z" fill="url(#gb)" stroke="#2f5fb5"/><path d="M14 12l8-3v9l-7 4z" fill="#2f60cc"/></symbol>
<symbol id="sketch" viewBox="0 0 24 24"><path d="M5 4h15l3 15H1z" fill="#fff" stroke="#222" stroke-width="1.500"/><path d="M6 15V9h4l2 3c1-5 7-5 6 0 0 3-3 4-5 3z" fill="#dfe8ff" stroke="#223a80"/></symbol>
<symbol id="green" viewBox="0 0 24 24"><path d="M1 12C6 5 9 4 13 4c3 3 7 4 10 5-3 3-6 7-9 12-5-5-9-7-13-9z" fill="#bfe8cc" stroke="#1c6b3a"/><path d="M5 8c4 2 9 6 12 9M9 5c4 3 8 6 11 7M5 14c4-5 8-8 12-8M10 17c4-5 7-8 10-9" stroke="#1c7a44" fill="none"/></symbol>
<symbol id="pipe" viewBox="0 0 24 24"><path d="M1 15V6l7-4 14 5v12l-5 3V11l-9-3v9z" fill="#eef0ff" stroke="#4a58c8"/><path d="M8 8l4-3M17 11l5-4M8 2v6" stroke="#4a58c8"/><ellipse cx="4" cy="16" rx="3" ry="2" fill="#f4b04a" stroke="#c33"/><ellipse cx="19" cy="20" rx="3" ry="2" fill="#fff" stroke="#c33"/></symbol>
<symbol id="tools" viewBox="0 0 24 24"><path d="M12 12l9-11" stroke="#b8bec4" stroke-width="3"/><path d="M4 22l9-11" stroke="#2a56c8" stroke-width="4"/><path d="M9 8l12 14" stroke="#d6a83a" stroke-width="4"/><path d="M1 8c1-5 7-8 12-6l-1 3-5 6z" fill="#b9c0c8" stroke="#556"/></symbol>
<symbol id="ybox" viewBox="0 0 24 24"><path d="M3 7l5-4h14v14l-5 5H3z" fill="#f5e58a" fill-opacity=".5" stroke="#666"/><path d="M7 10h10v9H7z" fill="#eeca30"/><path d="M7 10l3-3h10l-3 3zM17 10l3-3v9l-3 3z" fill="#fbe98a" stroke="#a08420"/><path d="M3 7h14l5-4M17 7v15M8 3v4" fill="none" stroke="#666"/></symbol>
<symbol id="cyl2" viewBox="0 0 24 24"><path d="M2 3h8v14c-3 2-6 2-8 0z" fill="url(#gb)" stroke="#2f5fb5"/><path d="M13 10l5-2 5 3v10l-5 3-5-3z" fill="#6fa2ee" stroke="#2f5fb5"/><path d="M13 10l5-2 5 3-5 2z" fill="#f6bc54"/><path d="M5 19v3h6M9 20l3 2-3 2" stroke="#e0601a" stroke-width="2" fill="none"/></symbol>
<symbol id="extract" viewBox="0 0 24 24"><path d="M2 6l8-4 9 3v13l-8 5-9-4z" fill="#a8c8f6" stroke="#2f5fb5"/><path d="M2 6l8 3 9-4" fill="none" stroke="#2f5fb5"/><path d="M10 9l9-4v13l-8 5z" fill="url(#go)" stroke="#d8701c"/><path d="M14 14h6M18 11l4 3-4 3z" fill="#e04a1a" stroke="#e04a1a"/></symbol>
<symbol id="wave" viewBox="0 0 24 24"><path d="M1 4l6-3 5 3v6l-5 3-6-3z" fill="#cfe1fb" stroke="#2f5fb5"/><path d="M1 4l6 2 5-2M7 6v7" stroke="#2f5fb5" fill="none"/><path d="M11 10l4 4M12 15h4v-4z" stroke="#d22" fill="#d22"/><path d="M10 15c2 4 6 3 8-3l5 3c-2 8-7 10-13 5z" fill="url(#go)" stroke="#4a78c8"/></symbol>
<symbol id="delx" viewBox="0 0 24 24"><path d="M3 3l11 12M14 2L3 16" stroke="#222" stroke-width="2"/><path d="M18 1v16M16 2h4M16 16h4M1 20h14M2 18v4M14 18v4" stroke="#222"/><path d="M20 8l3 3M23 8l-3 3M7 22l3 2M10 22l-3 2" stroke="#c33"/></symbol>
<symbol id="redsurf" viewBox="0 0 24 24"><path d="M1 13C5 8 8 4 11 2c4 3 8 5 12 6-4 3-8 8-11 14-3-5-7-7-11-9z" fill="#f3d6dc" stroke="#c03040" stroke-width="1.500"/><path d="M6 12l5-6 7 4-6 7z" fill="#c9c6f4" stroke="#3a3f9c"/><path d="M9 9l6 5M8 14l6-6" stroke="#7a7ac8"/></symbol>
<symbol id="movebody" viewBox="0 0 24 24"><path d="M2 2l4-2 2 3 2-2 3 2v8l-5 2-6-3zM12 14l5-2 6 2v8l-6 2-5-2z" fill="url(#gb)" stroke="#2f5fb5"/><path d="M3 14v4h6M7 15l3 3-3 3" stroke="#e0601a" stroke-width="2" fill="none"/></symbol>
<symbol id="redbox" viewBox="0 0 24 24"><path d="M2 6l5-4h15v15l-5 5H2z" fill="#fff" stroke="#333"/><path d="M6 9l6-3 6 3v7l-6 4-6-4z" fill="#d01818"/><path d="M6 9l6-3 6 3-6 3z" fill="#ff7a6a"/><path d="M2 6h15v16M17 6l5-4" fill="none" stroke="#333"/></symbol>

<symbol id="r-asm" viewBox="0 0 24 24"><path d="M2 5l3-1V1l4-1 3 2v5l1 1v4l-5 2-6-2z" fill="#f2bb2c" stroke="#a87408"/><path d="M5 4l3 1 4-2M8 5v8M14 17l4-2 5 2v4l-5 2-4-2z" fill="#ffd95c" stroke="#a87408"/><path d="M14 12h9M5 14v10M5 19h6" stroke="#223a9c" stroke-width="1.500"/></symbol>
<symbol id="r-con" viewBox="0 0 24 24"><path d="M4 2l7 5-7 5zM20 2l-7 5 7 5z" fill="#1a34c0"/><path d="M12 0v24" stroke="#222" stroke-dasharray="3 2"/><path d="M1 15h9v8H1z" fill="#ffe02a" stroke="#555"/><path d="M14 14l9 9h-9z" fill="#c81e1e"/></symbol>
<symbol id="r-part" viewBox="0 0 24 24"><path d="M2 2h8v8H2z" fill="#c86ab8" stroke="#7a2068"/><ellipse cx="6" cy="2.500" rx="4" ry="1.500" fill="#f0b8e4" stroke="#7a2068"/><path d="M13 9h9" stroke="#111" stroke-width="1.500"/><path d="M5 13v11M5 18h6" stroke="#223a9c" stroke-width="1.500"/><circle cx="17" cy="18" r="4.500" fill="none" stroke="#8a2c78"/><circle cx="17" cy="18" r="1.500" fill="none" stroke="#8a2c78"/></symbol>
<symbol id="r-books" viewBox="0 0 24 24"><path d="M0 8l5-7h5L6 8v14H0z" fill="#f0862a"/><path d="M6 8l5-7h4l-4 7v14H6z" fill="#3aa83a"/><path d="M11 8l5-7h7v16l-5 6h-7z" fill="#2f7be0"/><path d="M1 8l4-6M7 8l4-6M12 8l5-6M17 8l5-6" stroke="#fff" stroke-width="1.500"/><path d="M18 8v15M2 12h3M2 17h3M7 12h3M7 17h3M13 12h3" stroke="#174a9c" fill="none"/></symbol>
<symbol id="r-info" viewBox="0 0 24 24"><circle cx="8" cy="16" r="7.500" fill="#2e7ae0" stroke="#1a4ca0"/><path d="M8 10v2M6 14h2v6M6 20h5" stroke="#fff" stroke-width="2" fill="none"/><path d="M8 2c8 0 15 6 15 14M8 5c6 0 11 4 12 11" stroke="#3a78d8" stroke-width="2" fill="none"/></symbol>
<symbol id="r-web" viewBox="0 0 24 24"><path d="M3 1h12l7 7v15H3z" fill="#fff" stroke="#4a6cb4"/><path d="M15 1v7h7" fill="#dce8fc" stroke="#4a6cb4"/><circle cx="12" cy="15" r="6" fill="#2f6a9a"/><path d="M8 18l3-8 3 2 2 4-4 4z" fill="#6ac06a"/></symbol>
<symbol id="clock" viewBox="0 0 24 24"><circle cx="12" cy="12" r="10.500" fill="#e8eef8" stroke="#55698c" stroke-width="2"/><path d="M12 5v8h6" stroke="#112" stroke-width="2" fill="none"/><path d="M12 2v2M12 20v2M2 12h2M20 12h2M5 5l1 1M19 5l-1 1M5 19l1-1M19 19l-1-1" stroke="#334"/></symbol>
<symbol id="r-role" viewBox="0 0 24 24"><path d="M1 4l5-2v18l-5 2z" fill="#eee" stroke="#777"/><path d="M8 2h15v18H8z" fill="#fff" stroke="#555"/><circle cx="12" cy="6" r="2" fill="#2a8ae0"/><circle cx="12" cy="11" r="2" fill="#2aa82a"/><circle cx="12" cy="16" r="2" fill="#d8301a"/><path d="M16 6h5M16 11h5M16 16h5" stroke="#555"/></symbol>
<symbol id="r-rain" viewBox="0 0 24 24"><path d="M2 1h8v22H2z" fill="url(#rainbow)"/><path d="M12 8l9 14" stroke="#111" stroke-width="3"/><circle cx="12" cy="6" r="3.500" fill="#fff"/></symbol>
<symbol id="r-wand" viewBox="0 0 24 24"><path d="M3 2h6v18H3z" fill="#5a9ae4" stroke="#2f5fb5"/><path d="M11 8h12l-6 5h-5zM12 12l8 1" fill="#8ab6ee" stroke="#2f5fb5"/><path d="M1 20h8" stroke="#3a3" stroke-width="2"/><path d="M12 9l8 13" stroke="#111" stroke-width="3"/><circle cx="12" cy="7" r="3" fill="#fff"/></symbol>
<symbol id="r-people" viewBox="0 0 24 24"><path d="M10 18c0-6 13-7 14 0z" fill="#2c8a3a"/><circle cx="17" cy="6" r="5" fill="#f0b870"/><path d="M12 5c0-6 10-6 10 0-3-2-7-2-10 0z" fill="#c88a1a"/><path d="M0 24c0-7 13-7 13 0z" fill="#9a6ad0"/><circle cx="6" cy="13" r="5.500" fill="#6a5a2c"/><circle cx="6.500" cy="14" r="3.500" fill="#f4c896"/></symbol>
<symbol id="r-pal" viewBox="0 0 24 24"><path d="M1 4l5-2v18l-5 2z" fill="#eee" stroke="#777"/><path d="M8 2h15v18H8z" fill="#fff" stroke="#555"/><path d="M10 4h11v11H10z" fill="#d83a3a"/><path d="M12 4h7v6h-7z" fill="#9ac8f4"/><path d="M10 12h11v3H10z" fill="#f0b84a"/></symbol>

<symbol id="pin" viewBox="0 0 24 24"><circle cx="14" cy="9" r="7" fill="#e6ebb0" stroke="#333" stroke-width="3"/><path d="M3 12l9 8-9 3zM9 17l-8 6" fill="#666" stroke="#222" stroke-width="2"/></symbol>
<symbol id="mview" viewBox="0 0 24 24"><path d="M10 1l9 4v11l-9 5-9-5V5zM1 5l9 4 9-4M10 9v12M1 16l9-7 9 7" fill="none" stroke="#1c8a5a" stroke-width="2"/><path d="M12 23l8-5M17 16l6 1-3 6z" fill="#e0401a" stroke="#e0401a"/></symbol>
<symbol id="check" viewBox="0 0 24 24"><path d="M1 12l6-2 3 6L21 3l3 2-13 18H8z" fill="#1c9a3a"/></symbol>
<symbol id="camera" viewBox="0 0 24 24"><path d="M2 8l12-6 1 14-11 6z" fill="#fce8ee" stroke="#c8304a" stroke-width="1.500"/><path d="M8 8l10-3 5 4v9l-9 3-6-5z" fill="#a87ac0" stroke="#6a3a8c"/><circle cx="12" cy="12" r="4" fill="#8ac" stroke="#446"/><circle cx="20" cy="14" r="3" fill="#e4d"/></symbol>
<symbol id="folder" viewBox="0 0 24 24"><path d="M2 20V5h7l2 3h9v4" fill="#ffe9a0" stroke="#9c7010" stroke-width="1.500"/><path d="M2 20l5-9h17l-5 9z" fill="#f7b52c" stroke="#9c7010" stroke-width="1.500"/></symbol>
<symbol id="csys" viewBox="0 0 24 24"><path d="M4 1v14l6 6M4 12l8-5 10 6M4 5l14 14M18 5v10L8 20" fill="none" stroke="#444" stroke-width="1.500"/><path d="M15 8l7-3" stroke="#2a2" stroke-width="2"/><path d="M13 18l8 5" stroke="#d22" stroke-width="2"/></symbol>

<symbol id="g-asm" viewBox="0 0 24 24"><path d="M3 8h8v13H3zM12 12l9-3v10l-9 3z" fill="#8d9088"/><circle cx="8" cy="6" r="4" fill="none" stroke="#777" stroke-width="2"/><circle cx="17" cy="6" r="4" fill="#9a9c80"/><path d="M8 1v11M3 6h10" stroke="#666"/></symbol>
<symbol id="g-filter" viewBox="0 0 24 24"><path d="M1 1h22v22H1z" fill="#e4d6d2" stroke="#c8303a" stroke-width="1.500"/><path d="M10 4v13M4 10h12" stroke="#543" stroke-width="2"/><path d="M11 12h11l-4 5v6l-3-2v-4z" fill="#e8b02a"/></symbol>
<symbol id="g-back" viewBox="0 0 24 24"><path d="M20 6c3 8-2 11-9 11v4l-9-7 9-6v4c5 0 8-2 9-6z" fill="#2a9a94" stroke="#1a6a74"/><path d="M18 6l4-1v4z" fill="#3a6ac0"/></symbol>
<symbol id="g-solid" viewBox="0 0 24 24"><path d="M1 11l8-7 11 2 3 9-9 6-9-2z" fill="#8f9194" stroke="#77797c"/><path d="M1 11l8-7 11 2-7 6z" fill="#a9abae"/></symbol>
<symbol id="g-rot" viewBox="0 0 24 24"><path d="M3 8c1-8 12-7 11 1M1 4l2 5 5-2" fill="none" stroke="#888" stroke-width="2"/><circle cx="16" cy="16" r="5" fill="none" stroke="#888" stroke-width="2"/><path d="M16 8v16M8 16h16" stroke="#888" stroke-width="2"/></symbol>
<symbol id="g-rot2" viewBox="0 0 24 24"><path d="M3 8c1-8 12-7 11 1M1 4l2 5 5-2" fill="none" stroke="#888" stroke-width="2"/><path d="M17 10v12M11 16h12M9 15v6l-7-3z" fill="#888" stroke="#888" stroke-width="2"/></symbol>
<symbol id="g-drill" viewBox="0 0 24 24"><path d="M1 3l12-1 3 3-2 4H3zM14 7l8 2v14h-6V12z" fill="#929292"/></symbol>
<symbol id="g-rect" viewBox="0 0 24 24"><path d="M3 4h18v16H3z" fill="none" stroke="#777" stroke-width="2" stroke-dasharray="3 2"/><circle cx="21" cy="20" r="2" fill="#777"/></symbol>
<symbol id="g-move" viewBox="0 0 24 24"><path d="M14 4v18M6 13h17M12 6l2-3 2 3zM12 20l2 3 2-3zM20 11l3 2-3 2z" fill="#888" stroke="#888" stroke-width="2"/><path d="M1 3l4 4M1 21l4-4M1 10v6" stroke="#888" stroke-width="2"/><circle cx="14" cy="13" r="5" fill="none" stroke="#888" stroke-width="2"/></symbol>
<symbol id="g-move2" viewBox="0 0 24 24"><path d="M9 2v14M2 9h14" stroke="#888" stroke-width="2"/><circle cx="9" cy="9" r="6" fill="none" stroke="#888" stroke-width="2"/><path d="M12 15l6-4 5 5-1 5-7 1z" fill="#999" stroke="#888"/></symbol>
<symbol id="g-end" viewBox="0 0 24 24"><path d="M3 21L20 4" stroke="#888" stroke-width="2"/><circle cx="20" cy="4" r="3" fill="#888"/></symbol>
<symbol id="g-mid" viewBox="0 0 24 24"><path d="M2 22L22 2" stroke="#888" stroke-width="2"/><circle cx="12" cy="12" r="3.500" fill="#888"/></symbol>
<symbol id="g-ctl" viewBox="0 0 24 24"><path d="M2 3c10-2 8 6 8 10s2 8 11 8" stroke="#888" stroke-width="2" fill="none"/><circle cx="10" cy="12" r="3" fill="#888"/></symbol>
<symbol id="g-int" viewBox="0 0 24 24"><path d="M12 1v22M1 14c7-7 15-7 22 0" stroke="#888" stroke-width="2" fill="none"/><circle cx="12" cy="9" r="3" fill="#888"/></symbol>
<symbol id="g-cen" viewBox="0 0 24 24"><circle cx="12" cy="12" r="10" stroke="#888" stroke-width="2" fill="none"/><circle cx="12" cy="12" r="2.500" fill="#888"/></symbol>
<symbol id="g-quad" viewBox="0 0 24 24"><circle cx="12" cy="12" r="9" stroke="#888" stroke-width="2" fill="none"/><path d="M10 1h4v4h-4zM10 19h4v4h-4zM1 10h4v4H1zM19 10h4v4h-4z" fill="#888"/></symbol>
<symbol id="g-plus" viewBox="0 0 24 24"><path d="M12 3v18M3 12h18" stroke="#888" stroke-width="2"/></symbol>
<symbol id="g-on" viewBox="0 0 24 24"><path d="M2 22L22 2" stroke="#888" stroke-width="2"/><circle cx="8" cy="16" r="3" fill="#888"/></symbol>
<symbol id="g-face" viewBox="0 0 24 24"><path d="M2 6c5-4 9-4 20-2-4 3-6 5-3 9l-4 1c-1 4 1 6 3 8-5-3-12-4-15-2-2-4-2-9-1-14z" fill="#8a8a8a"/></symbol>

<symbol id="c-param" viewBox="0 0 24 24"><path d="M10 1h10l4 4v12H10z" fill="#eef2ff" stroke="#5a6ac0"/><path d="M12 8h9M12 11h9M12 14h9" stroke="#e06a7a"/><path d="M3 13c2-3 7-3 9 0l2 2-2 3-3-1-2 6-4 1-1-3 4-5z" fill="#f3d04a" stroke="#96760e"/></symbol>
<symbol id="c-trim" viewBox="0 0 24 24"><path d="M5 2c8 0 13 3 14 10M0 12h22" fill="none" stroke="#111" stroke-width="1.500"/><path d="M17 13c-5 6-13 3-16 10" stroke="#888" fill="none" stroke-dasharray="2 1"/><path d="M12 6l11 10M21 8l-6 7" stroke="#d22" stroke-width="1.500"/></symbol>
<symbol id="c-corner" viewBox="0 0 24 24"><path d="M0 11h13v13" fill="none" stroke="#444" stroke-width="1.500"/><path d="M13 0v11h11" fill="none" stroke="#999" stroke-dasharray="3 1"/><path d="M7 5l12 11M17 7l-8 7" stroke="#d22" stroke-width="1.500"/></symbol>
<symbol id="c-div" viewBox="0 0 24 24"><path d="M1 22c9 2 12-2 12-10S15 2 23 2" fill="none" stroke="#111" stroke-width="1.500"/><path d="M10 2l7 7M16 3l-5 6M8 15l7 6M15 14l-5 7" stroke="#d22" stroke-width="1.500"/></symbol>
<symbol id="c-fil" viewBox="0 0 24 24"><path d="M0 1h9M21 14v10" stroke="#111" stroke-width="1.500"/><path d="M9 1c8 0 12 5 12 13" stroke="#d22" stroke-width="1.500" fill="none"/><path d="M11 1h10v11" stroke="#888" fill="none" stroke-dasharray="2 1"/></symbol>
<symbol id="c-str" viewBox="0 0 24 24"><path d="M1 1h12l10 10v12H12" fill="none" stroke="#2a34b0" stroke-width="1.500"/><path d="M1 1v22h11" fill="none" stroke="#333" stroke-width="1.500"/><path d="M5 1l8 9v13" fill="none" stroke="#777" stroke-dasharray="2 1"/><path d="M13 17h4M16 14l4 3-4 3z" fill="#e0601a" stroke="#e0601a"/></symbol>
<symbol id="c-len" viewBox="0 0 24 24"><path d="M0 22c8 0 13-4 14-10" fill="none" stroke="#111" stroke-width="1.500"/><path d="M14 12c2-4 2-7 0-10" fill="none" stroke="#d22" stroke-width="1.500"/><path d="M20 3c1 4 1 8-1 12M18 5l2-3 2 3M17 12l2 3 3-2" fill="none" stroke="#c33"/></symbol>
<symbol id="c-smooth" viewBox="0 0 24 24"><path d="M1 9c4-7 7 0 10-4s6 1 12-4" fill="none" stroke="#111" stroke-width="2"/><path d="M1 23c7-9 16-8 22-4" fill="none" stroke="#d22" stroke-width="1.500"/><path d="M11 8h3v3h2l-3 4-4-4h2z" fill="#e0701a"/></symbol>
</svg>

<div class="app">
  <header class="titlebar">
    <svg class="i18"><use href="#nx"/></svg>
    <h1>NX 8 - 建模 - [_model19.prt （修改的） ]</h1>
    <strong class="brand">SIEMENS</strong>
    <div class="winbtns">
      <button aria-label="最小化"><svg viewBox="0 0 18 20"><path d="M3 15h7" stroke="#fff" stroke-width="3"/></svg></button>
      <button aria-label="还原"><svg viewBox="0 0 18 20"><path d="M3 9h7v6H3zM6 8V5h7v7h-3" fill="none" stroke="#fff" stroke-width="2"/></svg></button>
      <button class="red" aria-label="关闭"><svg viewBox="0 0 18 20"><path d="M4 5l10 10M14 5L4 15" stroke="#fff" stroke-width="2"/></svg></button>
    </div>
  </header>

  <nav class="menubar">
    <span class="grip"></span>
    <svg class="i16"><use href="#part"/></svg>
    <button>文件<span>(<u>F</u>)</span></button>
    <button>编辑<span>(<u>E</u>)</span></button>
    <button>视图<span>(<u>V</u>)</span></button>
    <button>插入<span>(<u>S</u>)</span></button>
    <button>格式<span>(<u>R</u>)</span></button>
    <button>工具<span>(<u>T</u>)</span></button>
    <button>装配<span>(<u>A</u>)</span></button>
    <button>信息<span>(<u>I</u>)</span></button>
    <button>分析<span>(<u>L</u>)</span></button>
    <button>首选项<span>(<u>P</u>)</span></button>
    <button>浩强工具<span>v2.58</span></button>
    <button>窗口<span>(<u>O</u>)</span></button>
    <button><span>GC </span>工具箱</button>
    <button>星空<span> V6.935F</span></button>
    <button>帮助<span>(<u>H</u>)</span></button>
    <div class="docbtns">
      <button aria-label="最小化文档"><svg viewBox="0 0 16 16"><path d="M4 12h7" stroke="#555" stroke-width="2"/></svg></button>
      <button aria-label="还原文档"><svg viewBox="0 0 16 16"><path d="M4 8h6v4H4zM6 7V4h7v6h-2" fill="none" stroke="#555" stroke-width="1.500"/></svg></button>
      <button aria-label="关闭文档"><svg viewBox="0 0 16 16"><path d="M4 4l8 8M12 4l-8 8" stroke="#444" stroke-width="3"/></svg></button>
    </div>
  </nav>

  <div class="dock">
    <div class="toolbar">
      <span class="grip"></span>
      <button class="tool lab start"><svg><use href="#nx"/></svg>开始</button><button class="drop" aria-label="开始菜单"></button>
      <button class="tool" aria-label="新建"><svg><use href="#new"/></svg></button>
      <button class="tool" aria-label="打开"><svg><use href="#open"/></svg></button>
      <button class="tool" aria-label="保存"><svg><use href="#save"/></svg></button>
      <i class="sep"></i>
      <button class="tool" aria-label="剪切"><svg><use href="#cut"/></svg></button>
      <button class="tool" aria-label="复制"><svg><use href="#copy"/></svg></button>
      <button class="tool" aria-label="粘贴"><svg><use href="#paste"/></svg></button>
      <i class="sep"></i>
      <button class="tool" aria-label="撤消"><svg><use href="#undo"/></svg></button>
      <button class="tool" aria-label="重做"><svg><use href="#redo"/></svg></button>
      <i class="sep"></i>
      <button class="tool lab finder"><svg><use href="#binoc"/></svg>命令查找器</button>
      <button class="tool" aria-label="捕捉"><svg><use href="#snap"/></svg></button><button class="drop" aria-label="更多"></button>
      <i class="sep"></i>
      <button class="tool" aria-label="信息"><svg><use href="#info"/></svg></button>
      <button class="drop end" aria-label="工具条选项"></button>
    </div>
    <div class="toolbar">
      <span class="grip"></span>
      <button class="tool" aria-label="适合窗口"><svg><use href="#fit"/></svg></button><button class="drop" aria-label="更多"></button>
      <button class="tool" aria-label="定向视图"><svg><use href="#orient"/></svg></button><button class="drop" aria-label="更多"></button>
      <button class="tool" aria-label="着色"><svg><use href="#shade"/></svg></button><button class="drop" aria-label="更多"></button>
      <button class="tool" aria-label="高对比"><svg><use href="#yin"/></svg></button>
      <button class="tool" aria-label="截面"><svg><use href="#sect1"/></svg></button>
      <button class="tool" aria-label="编辑截面"><svg><use href="#sect2"/></svg></button>
      <button class="tool" aria-label="剪切截面"><svg><use href="#sect3"/></svg></button><button class="drop" aria-label="更多"></button>
      <button class="tool" aria-label="背景"><svg><use href="#bg"/></svg></button><button class="drop" aria-label="更多"></button>
      <i class="sep"></i>
      <button class="tool" aria-label="显示隐藏"><svg><use href="#clip2"/></svg></button>
      <button class="tool" aria-label="隐藏"><svg><use href="#clip"/></svg></button>
      <button class="drop end" aria-label="工具条选项"></button>
    </div>
    <div class="toolbar">
      <span class="grip"></span>
      <button class="tool" aria-label="图层"><svg><use href="#layers"/></svg></button>
      <button class="tool" aria-label="坐标"><svg><use href="#points"/></svg></button><button class="drop" aria-label="更多"></button>
      <i class="sep"></i>
      <button class="tool" aria-label="编辑对象"><svg><use href="#editobj"/></svg></button>
      <button class="tool" aria-label="对象颜色"><svg><use href="#paint"/></svg></button>
      <i class="sep"></i>
      <button class="tool" aria-label="显示对象"><svg><use href="#showobj"/></svg></button><button class="drop" aria-label="更多"></button>
      <i class="sep"></i>
      <button class="tool" aria-label="测量距离"><svg><use href="#ruler"/></svg></button>
      <button class="tool" aria-label="测量角度"><svg><use href="#angle"/></svg></button>
      <button class="drop end" aria-label="工具条选项"></button>
    </div>
    <div class="toolbar">
      <span class="grip"></span>
      <button class="tool" aria-label="直纹"><svg><use href="#surf1"/></svg></button>
      <button class="tool" aria-label="曲线网格"><svg><use href="#surf2"/></svg></button>
      <button class="tool" aria-label="分析"><svg><use href="#analysis"/></svg></button>
      <button class="tool" aria-label="N边曲面"><svg><use href="#surf3"/></svg></button>
      <button class="tool" aria-label="扩大"><svg><use href="#mesh"/></svg></button>
      <button class="tool" aria-label="桥接"><svg><use href="#rcurves"/></svg></button>
      <button class="tool" aria-label="片体"><svg><use href="#sheet"/></svg></button>
      <button class="drop" aria-label="更多"></button>
      <button class="drop end" aria-label="工具条选项"></button>
    </div>
  </div>

  <div class="dock second">
    <div class="toolbar">
      <span class="grip"></span>
      <button class="tool" aria-label="基准平面"><svg><use href="#datum"/></svg></button><button class="drop" aria-label="更多"></button>
      <button class="tool" aria-label="拉伸"><svg><use href="#extrude"/></svg></button>
      <button class="tool" aria-label="回转"><svg><use href="#revolve"/></svg></button>
      <button class="tool" aria-label="孔"><svg><use href="#hole"/></svg></button>
      <button class="tool" aria-label="凸起"><svg><use href="#emboss"/></svg></button>
      <button class="tool" aria-label="扫掠"><svg><use href="#sweep"/></svg></button>
      <i class="sep"></i>
      <button class="tool" aria-label="阵列"><svg><use href="#pattern"/></svg></button>
      <button class="tool" aria-label="抽取"><svg><use href="#lift"/></svg></button>
      <button class="tool" aria-label="实例"><svg><use href="#instance"/></svg></button>
      <button class="tool" aria-label="求和"><svg><use href="#unite"/></svg></button><button class="drop" aria-label="更多"></button>
      <button class="tool" aria-label="拆分体"><svg><use href="#split"/></svg></button>
      <button class="tool" aria-label="修剪片体"><svg><use href="#strim"/></svg></button>
      <button class="tool" aria-label="修剪与延伸"><svg><use href="#leg"/></svg></button>
      <button class="tool" aria-label="分割面"><svg><use href="#slab"/></svg></button>
      <button class="tool" aria-label="抽壳"><svg><use href="#blocku"/></svg></button>
      <button class="tool" aria-label="加厚"><svg><use href="#tubes"/></svg></button>
      <i class="sep"></i>
      <button class="tool" aria-label="边倒圆"><svg><use href="#eblend"/></svg></button>
      <button class="tool" aria-label="面倒圆"><svg><use href="#face1"/></svg></button>
      <button class="tool" aria-label="软倒圆"><svg><use href="#face1"/></svg></button>
      <button class="tool" aria-label="倒斜角"><svg><use href="#chamfer"/></svg></button>
      <button class="tool" aria-label="拔模"><svg><use href="#draft"/></svg></button>
      <button class="tool" aria-label="小平面体"><svg><use href="#poly"/></svg></button>
      <button class="drop end" aria-label="工具条选项"></button>
    </div>
    <div class="toolbar">
      <span class="grip"></span>
      <button class="tool" aria-label="移动面"><svg><use href="#move"/></svg></button><button class="drop" aria-label="更多"></button>
      <button class="tool" aria-label="调整倒圆"><svg><use href="#resize"/></svg></button><button class="drop" aria-label="更多"></button>
      <button class="tool" aria-label="删除面"><svg><use href="#delface"/></svg></button>
      <button class="tool" aria-label="复制面"><svg><use href="#copyface"/></svg></button><button class="drop" aria-label="更多"></button>
      <button class="tool" aria-label="阵列面"><svg><use href="#patface"/></svg></button><button class="drop" aria-label="更多"></button>
      <button class="tool" aria-label="线性尺寸"><svg><use href="#dimface"/></svg></button><button class="drop" aria-label="更多"></button>
      <button class="tool" aria-label="组合面"><svg><use href="#grpface"/></svg></button>
      <button class="tool" aria-label="建模模式"><svg><use href="#hist"/></svg></button>
      <button class="drop end" aria-label="工具条选项"></button>
    </div>
  </div>

  <div class="cue">
    <p>输入半径或通过点指定半径</p>
    <p class="status">投影到支持平面上的点</p>
    <span class="cell"></span><span class="cell wide"></span>
    <span class="cell icons">
      <svg viewBox="0 0 16 16"><path d="M0 0h16v16H0z" fill="#8a9896"/><path d="M3 11V4h3v7l2-6 2 6 3-7v5" fill="none" stroke="#6c7876"/></svg>
      <svg viewBox="0 0 16 16"><path d="M1 4V1h3M12 1h3v3M15 12v3h-3M4 15H1v-3" fill="none" stroke="#333"/><path d="M3.500 3.500h9v9h-9z" fill="#fff" stroke="#345"/><path d="M5 6h6v5H5z" fill="#4a86d8"/></svg>
    </span>
  </div>

  <main class="work">
    <aside class="resbar">
      <button aria-label="装配导航器"><svg><use href="#r-asm"/></svg></button>
      <button aria-label="约束导航器"><svg><use href="#r-con"/></svg></button>
      <button class="active" aria-label="部件导航器"><svg><use href="#r-part"/></svg></button>
      <button aria-label="重用库"><svg><use href="#r-books"/></svg></button>
      <button class="apart" aria-label="HD3D工具"><svg><use href="#r-info"/></svg></button>
      <button class="apart" aria-label="浏览器"><svg><use href="#r-web"/></svg></button>
      <button class="apart" aria-label="历史记录"><svg><use href="#clock"/></svg></button>
      <button aria-label="系统材料"><svg><use href="#r-role"/></svg></button>
      <button aria-label="可视化向导"><svg><use href="#r-rain"/></svg></button>
      <button aria-label="加工向导"><svg><use href="#r-wand"/></svg></button>
      <button aria-label="角色"><svg><use href="#r-people"/></svg></button>
      <button aria-label="系统场景"><svg><use href="#r-pal"/></svg></button>
    </aside>

    <section class="navigator">
      <h2><svg><use href="#pin"/></svg>部件导航器</h2>
      <div class="tree">
        <table>
          <thead><tr><th>名称<b class="sort"></b></th></tr></thead>
          <tbody>
            <tr><td><span class="node top"></span><svg><use href="#clock"/></svg>历史记录模式</td></tr>
            <tr><td><span class="node"><button aria-label="展开">+</button></span><svg><use href="#mview"/></svg>模型视图</td></tr>
            <tr><td><span class="node"><button aria-label="展开">+</button></span><svg class="tick"><use href="#check"/></svg><svg><use href="#camera"/></svg>摄像机</td></tr>
            <tr><td><span class="node last"><button aria-label="折叠">−</button></span><svg><use href="#folder"/></svg>模型历史记录</td></tr>
            <tr><td><span class="node child"></span><label><input type="checkbox" checked><svg><use href="#csys"/></svg>基准坐标系<span class="count">(0)</span></label></td></tr>
          </tbody>
        </table>
      </div>
      <div class="hscroll"><span></span></div>
    </section>

    <section class="viewport">
      <svg class="scene">
        <g transform="translate(-373 -157)">
          <circle cx="673" cy="440" r="29" fill="#00f"/>
          <path d="M641 426H1788V874H641Z" fill="none" stroke="#1fb82a" stroke-width="2"/>
          <path d="M648 426h50" stroke="#1e8ff0" stroke-width="2"/>
          <path d="M673 440l17 24" stroke="#127a6c" stroke-width="2"/><path d="M690 464l28 39" stroke="#1f80d8" stroke-width="2"/>
          <path d="M728 382l-46 51" stroke="#8e8a70"/>
          <path d="M718 427l-20 4-14 5-11 5-8 8-11 15-8 23-3 16" fill="none" stroke="#e8a070" stroke-width="2"/>
          <path d="M698 431l-14 5-11 5-8 8-11 15" fill="none" stroke="#d8a8e8" stroke-width="2"/>
          <circle cx="673" cy="441" r="10" fill="none" stroke="#fff" stroke-dasharray="12 4" stroke-dashoffset="-2"/>
          <path d="M673.500 425v31M658 440.500h31" stroke="#000" stroke-width="3"/><path d="M673.500 426v29M659 440.500h29" stroke="#fff"/>
          <circle cx="718" cy="425" r="4.500" fill="url(#brass)"/><circle cx="641" cy="503" r="4.500" fill="url(#brass)"/>

          <path d="M441 933h29v29h-29z" fill="#9c9c9c" stroke="#bbb"/>
          <path d="M441 961V922" stroke="#3b9c4a" stroke-width="2"/><path d="M441 914l4 13h-7z" fill="#2c8c3c"/>
          <path d="M441 962h36" stroke="#c8402c" stroke-width="2"/><path d="M489 961.500l-13-4v7z" fill="#e8503c"/>
          <circle cx="441" cy="961.500" r="4" fill="#1a4cd8" stroke="#9ab4ff"/>
          <text x="437" y="913" fill="#3c7c44">Y</text><text x="489" y="966" fill="#b83c34">X</text>

          <path d="M1358 1040V930" stroke="#0a0ab4" stroke-width="2"/><path d="M1358.500 930v-26" stroke="#0a0ab4"/>
          <path d="M1358 906l4 16h-8z" fill="#0000f0"/><path d="M1359 971.500h66.500V1040" fill="none" stroke="#0a0ab0"/>
          <text x="1355" y="901" fill="#4a3cc8">V</text>
        </g>
      </svg>

      <form class="radius">
        <span class="handle"></span>
        <label for="rad">半径</label>
        <span class="field"><span class="val"><input id="rad" value="40"></span><span class="unit">mm</span><button type="button" aria-label="选项"><svg viewBox="0 0 14 16"><path d="M4 2h6v6h4l-7 7-7-7h4z" fill="#111"/></svg></button></span>
      </form>

      <section class="palette cheng">
        <header><h3>chengfeng</h3><button class="more" aria-label="选项"></button><button class="close" aria-label="关闭">✖</button></header>
        <div class="icons">
          <button aria-label="直线"><svg><use href="#line"/></svg></button><button aria-label="圆"><svg><use href="#circle"/></svg></button><button aria-label="圆弧"><svg><use href="#arc"/></svg></button><button aria-label="样条"><svg><use href="#spline"/></svg></button><button aria-label="偏置曲线"><svg><use href="#offset"/></svg></button><button aria-label="桥接曲线"><svg><use href="#bridge"/></svg></button><button aria-label="简化曲线"><svg><use href="#join1"/></svg></button><button aria-label="连结曲线"><svg><use href="#join2"/></svg></button><button aria-label="投影曲线"><svg><use href="#project"/></svg></button><button aria-label="组合投影"><svg><use href="#combine"/></svg></button><button aria-label="相交曲线"><svg><use href="#isect"/></svg></button><button aria-label="等参数曲线"><svg><use href="#iso"/></svg></button><button aria-label="镜像曲线"><svg><use href="#planes"/></svg></button><button aria-label="缠绕"><svg><use href="#wrap"/></svg></button><button aria-label="展开"><svg><use href="#wrap2"/></svg></button><button aria-label="抽取曲线"><svg><use href="#lift"/></svg></button><button aria-label="相切"><svg><use href="#tangent"/></svg></button>
          <button aria-label="修剪体"><svg><use href="#body1"/></svg></button><button aria-label="分割体"><svg><use href="#body2"/></svg></button><button aria-label="求和"><svg><use href="#unite"/></svg></button><button aria-label="求差"><svg><use href="#subtract"/></svg></button><button aria-label="求交"><svg><use href="#intersect"/></svg></button><button aria-label="缝合"><svg><use href="#sew"/></svg></button><button aria-label="取消缝合"><svg><use href="#unsew"/></svg></button><button aria-label="补片"><svg><use href="#patch"/></svg></button><button aria-label="拆分"><svg><use href="#split"/></svg></button><button aria-label="分割面"><svg><use href="#split2"/></svg></button><button aria-label="凹模"><svg><use href="#trap"/></svg></button><button aria-label="修剪片体"><svg><use href="#strim"/></svg></button><button aria-label="延伸"><svg><use href="#leg"/></svg></button><button aria-label="抽壳"><svg><use href="#blocku"/></svg></button><button aria-label="加厚"><svg><use href="#tubes"/></svg></button><button aria-label="偏置面"><svg><use href="#offface"/></svg></button><button aria-label="缩放体"><svg><use href="#scale"/></svg></button>
          <button aria-label="边倒圆"><svg><use href="#eblend"/></svg></button><button aria-label="倒斜角"><svg><use href="#chamfer"/></svg></button><button aria-label="拔模"><svg><use href="#draft"/></svg></button><button aria-label="有界平面"><svg><use href="#sketch"/></svg></button><button aria-label="直纹面"><svg><use href="#surfa"/></svg></button><button aria-label="通过曲线组"><svg><use href="#surf1"/></svg></button><button aria-label="曲线网格"><svg><use href="#surf2"/></svg></button><button aria-label="N边曲面"><svg><use href="#surf3"/></svg></button><button aria-label="艺术曲面"><svg><use href="#green"/></svg></button><button aria-label="扩大"><svg><use href="#mesh"/></svg></button><button aria-label="管道"><svg><use href="#pipe"/></svg></button><button aria-label="工具"><svg><use href="#tools"/></svg></button><button aria-label="创建方块"><svg><use href="#ybox"/></svg></button><button aria-label="替换面"><svg><use href="#cyl2"/></svg></button><button aria-label="移动面"><svg><use href="#extract"/></svg></button><button aria-label="链接"><svg><use href="#wave"/></svg></button><button aria-label="移除参数"><svg><use href="#delx"/></svg></button>
          <button aria-label="偏置曲面"><svg><use href="#redsurf"/></svg></button><button aria-label="移动对象"><svg><use href="#movebody"/></svg></button><button aria-label="包容体"><svg><use href="#redbox"/></svg></button>
        </div>
        <footer></footer>
      </section>

      <section class="palette curves">
        <header><h3>编辑曲线</h3><button class="more" aria-label="选项"></button><button class="close" aria-label="关闭">✖</button></header>
        <div class="grid">
          <button><svg><use href="#c-param"/></svg>编辑曲线参数</button>
          <button><svg><use href="#c-trim"/></svg>修剪曲线</button>
          <button><svg><use href="#c-corner"/></svg>修剪拐角</button>
          <button><svg><use href="#c-div"/></svg>分割曲线</button>
          <button><svg><use href="#c-fil"/></svg>编辑圆角</button>
          <button><svg><use href="#c-str"/></svg>拉长曲线</button>
          <button><svg><use href="#c-len"/></svg>曲线长度</button>
          <button><svg><use href="#c-smooth"/></svg>光顺样条</button>
        </div>
        <footer></footer>
      </section>
    </section>

    <section class="dialog">
      <header><h3>圆弧（相切-相切-半径）</h3><button aria-label="关闭">✖</button></header>
      <button class="row">关闭圆弧（相切-相切-半径）</button>
      <footer></footer>
    </section>

    <figure class="logo">
      <svg viewBox="0 0 64 46">
        <path d="M31 4V2l1-1 1 1v2M34 5h2l1 1-1 1h-2M33 8v2l-1 1-1-1V8M30 7h-2l-1-1 1-1h2" fill="none" stroke="#2b2f8e" stroke-width="1.200"/>
        <path d="M28 40l-2 2H16L3 29 18 15l5 4M41 19l5-4L61 29 48 42H31L18 29 32 15l14 14-9 9M25 24l7 7 8-8" fill="none" stroke="#2b2f8e" stroke-width="4"/>
      </svg>
      <figcaption>点冠教育<small>DIANGUAN EDUCATION</small></figcaption>
    </figure>
  </main>

  <footer class="selbar">
    <select disabled aria-label="类型过滤器"><option></option></select>
    <select class="scope" disabled aria-label="选择范围"><option>仅在工作部件内</option></select>
    <button class="tool" aria-label="装配范围"><svg><use href="#g-asm"/></svg></button>
    <i class="sep"></i>
    <button class="tool" aria-label="过滤"><svg><use href="#g-filter"/></svg></button><button class="drop small" aria-label="更多"></button>
    <button class="tool" aria-label="返回"><svg><use href="#g-back"/></svg></button>
    <button class="tool" aria-label="实体"><svg><use href="#g-solid"/></svg></button>
    <button class="tool" aria-label="旋转"><svg><use href="#g-rot"/></svg></button>
    <button class="tool" aria-label="旋转点"><svg><use href="#g-rot2"/></svg></button>
    <button class="tool" aria-label="钻"><svg><use href="#g-drill"/></svg></button>
    <i class="sep"></i>
    <button class="tool" aria-label="矩形选择"><svg><use href="#g-rect"/></svg></button><button class="drop" aria-label="更多"></button>
    <i class="sep"></i>
    <button class="tool" aria-label="启用捕捉"><svg><use href="#g-move"/></svg></button>
    <button class="tool" aria-label="清除捕捉"><svg><use href="#g-move2"/></svg></button>
    <button class="tool" aria-label="端点"><svg><use href="#g-end"/></svg></button>
    <button class="tool" aria-label="中点"><svg><use href="#g-mid"/></svg></button>
    <button class="tool" aria-label="控制点"><svg><use href="#g-ctl"/></svg></button>
    <button class="tool" aria-label="交点"><svg><use href="#g-int"/></svg></button>
    <button class="tool" aria-label="圆心"><svg><use href="#g-cen"/></svg></button>
    <button class="tool" aria-label="象限点"><svg><use href="#g-quad"/></svg></button>
    <button class="tool" aria-label="现有点"><svg><use href="#g-plus"/></svg></button>
    <button class="tool" aria-label="曲线上的点"><svg><use href="#g-on"/></svg></button>
    <button class="tool" aria-label="面上的点"><svg><use href="#g-face"/></svg></button>
    <i class="sep"></i>
    <button class="tool" aria-label="对话框"><svg><use href="#shade"/></svg></button>
    <button class="drop end last" aria-label="工具条选项"></button>
  </footer>
</div>
</body>
</html>
```

FILE: styles.css
```css
* { box-sizing: border-box; }
body {
  margin: 0;
  padding: 20px 0;
  background: #000;
  color: #000;
  font: 12px/16px "Noto Sans", "Noto Sans CJK SC", sans-serif;
}
h1, h2, h3, p, figure { margin: 0; }
button { margin: 0; padding: 0; border: 0; background: none; color: inherit; font: inherit; }
svg { flex: none; display: block; }
.defs { position: absolute; }

.app { display: flex; flex-direction: column; min-height: calc(100vh - 40px); }

/* title bar */
.titlebar {
  display: flex; align-items: center; height: 22px; padding: 0 2px;
  background: linear-gradient(#5a5a5a, #777 8px, #1c1c1c 8px, #1c1c1c 21px, #000 21px);
  color: #fff;
}
.i18 { width: 18px; height: 18px; margin-right: 4px; }
.i16 { width: 16px; height: 16px; margin: 0 4px 0 3px; }
.titlebar h1 { flex: 1; font: 400 12px/16px "DejaVu Sans", "Noto Sans CJK SC", sans-serif; white-space: pre; }
.brand { margin-right: 27px; font: 800 14px/16px "Open Sans", sans-serif; }
.winbtns { display: flex; gap: 4px; }
.winbtns button { width: 18px; height: 20px; border: 1px solid #777; border-top: 0; border-radius: 0 0 3px 3px; background: linear-gradient(#777, #3a3a3a 50%, #444); }
.winbtns .red { background: linear-gradient(#f0a088, #d84a1c 50%, #f07848); border-color: #f0a890; }
.winbtns svg { width: 16px; height: 18px; }

/* menu bar */
.menubar { display: flex; align-items: center; height: 24px; padding-left: 4px; background: #e4e4e4; border-bottom: 1px solid #b4b4b4; }
.menubar > button { margin-right: 11px; white-space: pre; }
.menubar > button span { font: 11px/16px "Liberation Mono", monospace; }
.docbtns { display: flex; gap: 2px; margin-left: auto; padding-right: 5px; }
.docbtns button { width: 17px; height: 17px; border: 1px solid #777; border-radius: 4px; background: #eee; }
.docbtns svg { width: 15px; height: 15px; }
.grip { flex: none; width: 2px; height: 16px; background: repeating-linear-gradient(#999 0 2px, #f4f4f4 2px 4px); }

/* docked toolbars */
.dock { display: flex; height: 34px; background: linear-gradient(#dcdcdc, #d2d2d2); }
.dock.second { background: linear-gradient(#d0d0d0, #cacaca); }
.toolbar { display: flex; align-items: center; border-top: 1px solid #f2f2f2; border-right: 1px solid #b0b0b0; border-bottom: 1px solid #bdbdbd; background: linear-gradient(#e0e0e0, #d2d2d2); }
.toolbar .grip { height: 22px; margin: 0 1px 0 4px; }
.tool { display: flex; flex: none; align-items: center; justify-content: center; width: 31px; height: 30px; }
.tool svg { width: 23px; height: 23px; }
.tool.lab { justify-content: flex-start; padding-left: 4px; gap: 4px; white-space: nowrap; }
.tool.start { width: 56px; }
.tool.finder { width: 95px; }
.drop { flex: none; width: 12px; height: 30px; display: grid; place-items: center; }
.drop::before { content: ""; border: 3px solid transparent; border-top-color: #000; border-bottom: 0; }
.drop.end { width: 14px; align-items: end; padding-bottom: 5px; }
.drop.small { width: 8px; }
.drop.last { margin-left: auto; }
.sep { flex: none; width: 6px; height: 31px; border-left: 2px solid transparent; background: linear-gradient(90deg, transparent, #b8b8b8 0 1px, #f4f4f4 1px 2px, transparent 2px) no-repeat; }

/* cue line */
.cue { display: flex; align-items: center; height: 23px; padding: 0 0 2px 3px; border-top: 1px solid #f6f6f6; border-bottom: 2px solid #777; background: #d8d8d8; font-weight: 700; font-size: 13px; }
.cue p { width: 47%; flex: none; }
.cue .status { flex: 1; padding-left: 10px; }
.cue .cell { align-self: stretch; width: 20px; border-left: 1px solid #aaa; box-shadow: inset 1px 0 #f6f6f6; }
.cue .wide { width: 36px; }
.cue .icons { display: flex; align-items: center; gap: 5px; width: 44px; padding-left: 3px; }
.cue svg { width: 16px; height: 16px; }

/* work area */
.work { position: relative; display: flex; flex: 1; min-height: 560px; }
.resbar { display: flex; flex-direction: column; align-items: flex-end; gap: 2px; flex: none; width: 33px; padding-top: 16px; background: linear-gradient(90deg, #b6b6b6, #a4a4a4); border-right: 1px solid #555; }
.resbar button { width: 26px; height: 40px; border: 1px solid #666; border-right: 0; border-radius: 4px 0 0 4px; background: #dcdcdc; display: grid; place-items: center; }
.resbar svg { width: 23px; height: 24px; }
.resbar .active { width: 28px; background: #f0f0f0; }
.resbar .apart { margin-top: 12px; }

.navigator { display: flex; flex-direction: column; flex: none; width: 340px; padding: 0 10px 0 9px; background: #ececec; border-right: 2px solid #999; }
.navigator h2 { display: flex; align-items: center; gap: 13px; height: 35px; padding: 2px 0 0 6px; font-size: 13px; }
.navigator h2 svg { width: 11px; height: 11px; }
.tree {
  flex: 1; overflow: hidden; border: 1px solid #666;
  background:
    linear-gradient(#ddd, #ddd) 200px 0 / 1px 100% no-repeat,
    linear-gradient(#ddd, #ddd) 300px 0 / 1px 100% no-repeat,
    repeating-linear-gradient(#fff 0 19px, #e2e2e2 19px 20px, #f6f6f6 20px 39px, #e2e2e2 39px 40px) 0 16px;
}
.tree table { width: 100%; border-collapse: collapse; }
.tree th { height: 17px; padding: 0 0 0 7px; background: linear-gradient(#f0f0f0, #d0d0d0); text-align: left; font-weight: 400; line-height: 16px; }
.sort { display: inline-block; margin-left: 16px; border: 5px solid transparent; border-bottom: 6px solid #000; border-top: 0; }
.tree td { height: 20px; padding: 0; color: #222; line-height: 16px; }
.tree td, .tree label { white-space: nowrap; }
.tree svg { display: inline-block; width: 16px; height: 16px; margin-right: 4px; vertical-align: middle; }
.tree .tick { width: 13px; }
.node { position: relative; display: inline-block; width: 19px; height: 20px; vertical-align: middle; background: linear-gradient(#999, #999) 10px 0 / 1px 100% no-repeat; }
.node.top { background: linear-gradient(#999, #999) 10px 10px / 9px 1px no-repeat, linear-gradient(#999, #999) 10px 10px / 1px 10px no-repeat; }
.node.last { background-size: 1px 10px; }
.node.child { width: 38px; background: linear-gradient(#999, #999) 29px 10px / 9px 1px no-repeat, linear-gradient(#999, #999) 29px 0 / 1px 10px no-repeat; }
.node button { display: block; width: 9px; height: 9px; margin: 5px 0 0 5px; border: 1px solid #777; border-radius: 2px; background: #fff; font: 9px/7px "DejaVu Sans", sans-serif; }
.tree input { appearance: none; width: 12px; height: 12px; margin: 0 2px 0 2px; border: 1px solid #111; vertical-align: middle; background: #fff; }
.tree input::before { content: "✔"; display: block; color: #1c9a3a; font: 11px/10px "DejaVu Sans", sans-serif; }
.tree .count { margin-left: 9px; }
.hscroll { height: 18px; padding: 4px 0; }
.hscroll span { display: block; width: 205px; height: 4px; border-top: 1px solid #aaa; background: linear-gradient(#c4c4c4, #c4c4c4) right / 73px 4px no-repeat; }

.viewport { position: relative; flex: 1; min-width: 0; overflow: hidden; background: #000; }
.scene { position: absolute; inset: 0; width: 100%; height: 100%; }
.scene text { font: 10px "Liberation Sans", sans-serif; }

/* floating windows over the canvas */
.radius { position: absolute; left: 355px; top: 204px; display: flex; align-items: center; height: 28px; padding-right: 4px; background: #d4d4d4; border: 1px solid #aaa; }
.handle { width: 12px; height: 26px; margin-right: 7px; background: radial-gradient(circle, #000 1px, transparent 1px) 0 0 / 4px 4px, linear-gradient(90deg, #333, #999); }
.field { display: flex; margin-left: 3px; height: 19px; width: 107px; border: 1px solid #666; border-radius: 3px; background: #ddd; }
.val { flex: 1; padding: 1px 3px; background: #fff; }
.val input { display: block; width: 14px; height: 14px; padding: 0; border: 0; background: #2f86dc; color: #fff; font: 12px/14px "Liberation Sans", sans-serif; }
.unit { width: 36px; padding-left: 4px; font: 10px/18px "Liberation Mono", monospace; }
.field button { width: 16px; background: linear-gradient(#d4e8fc, #6ca4dc); border-left: 1px solid #568; }
.field button svg { width: 13px; height: 13px; margin-left: 1px; }

.palette { position: absolute; background: linear-gradient(#e4e4e4, #cecece); border-radius: 4px; }
.palette header { display: flex; height: 21px; padding-left: 8px; border-radius: 4px 4px 0 0; background: linear-gradient(#888, #555 7px, #1c1c1c 7px); color: #fff; }
.palette h3 { flex: 1; font: 700 13px/18px "Noto Sans CJK SC", sans-serif; }
.more { width: 20px; display: grid; place-items: center; }
.more::before { content: ""; border: 4px solid transparent; border-top-color: #fff; border-bottom: 0; }
.close { width: 21px; border-left: 1px solid #777; font: 15px/20px "DejaVu Sans", sans-serif; }
.palette footer, .dialog footer { height: 8px; border-top: 1px solid #666; background: #1a1a1a; border-radius: 0 0 4px 4px; }
.cheng { right: 82px; top: 61px; }
.cheng h3 { font: 700 12px/20px "Liberation Mono", monospace; }
.cheng .icons { display: grid; grid-template-columns: repeat(17, 31px); grid-auto-rows: 30px; padding: 2px 5px 2px 3px; }
.cheng .icons button { display: grid; place-items: center; }
.cheng .icons svg { width: 24px; height: 24px; }
.curves { right: 270px; top: 289px; width: 128px; }
.curves .grid { display: grid; grid-template-columns: 60px 60px; grid-auto-rows: 58px; justify-content: center; padding: 4px 3px 0 0; }
.curves .grid button { display: flex; flex-direction: column; align-items: center; gap: 5px; padding: 1px 6px 0; line-height: 12px; }
.curves .grid svg { width: 23px; height: 23px; }

.dialog { position: absolute; left: 174px; top: 9px; width: 188px; background: #e6e6e6; border-radius: 5px; font-family: "Liberation Mono", "Noto Sans CJK SC", monospace; }
.dialog header { display: flex; align-items: center; height: 23px; padding: 2px 4px 0 9px; border-radius: 5px 5px 0 0; background: linear-gradient(#666, #444 8px, #111 8px); color: #fff; }
.dialog h3 { flex: 1; font-size: 12px; font-weight: 400; white-space: nowrap; }
.dialog header button { width: 17px; height: 17px; border-radius: 3px; border: 1px solid #f0a890; background: #dc5028; font: 12px/14px "DejaVu Sans", sans-serif; }
.dialog .row { display: block; width: 100%; height: 33px; padding: 6px 0 0 15px; text-align: left; white-space: nowrap; }

.logo { position: absolute; left: 209px; bottom: 8px; width: 180px; height: 109px; padding: 12px 4px 0 0; background: #f8f8f8; color: #222; text-align: center; }
.logo svg { width: 66px; height: 50px; margin: 0 auto; }
.logo figcaption { font: 900 21px/23px "Noto Sans CJK SC", sans-serif; }
.logo small { display: block; font: 700 7px/9px "Noto Sans", sans-serif; }

/* selection bar */
.selbar { display: flex; align-items: center; height: 28px; padding: 0 2px 0 5px; border-top: 1px solid #888; background: linear-gradient(#c2c2c2, #dcdcdc); }
.selbar select {
  appearance: none; width: 111px; height: 17px; margin-right: 7px; padding: 0 2px; border: 1px solid #999; border-radius: 3px; opacity: 1;
  color: #909090; font: 12px/15px "Noto Sans CJK SC", sans-serif; text-shadow: 1px 1px #f4f4f4;
  background:
    linear-gradient(to bottom left, #888 50%, transparent 50%) right 8px top 5px / 5px 5px no-repeat,
    linear-gradient(to bottom right, #888 50%, transparent 50%) right 3px top 5px / 5px 5px no-repeat,
    linear-gradient(#eee, #eee) right / 16px 100% no-repeat,
    linear-gradient(#999, #999) right 16px top / 1px 100% no-repeat, #ccc;
}
.selbar .scope { width: 117px; margin-right: 3px; }
.selbar .tool { width: 23px; height: 24px; }
.selbar .tool svg { width: 17px; height: 17px; }
.selbar .drop { height: 24px; }
.selbar .sep { height: 24px; }
```
